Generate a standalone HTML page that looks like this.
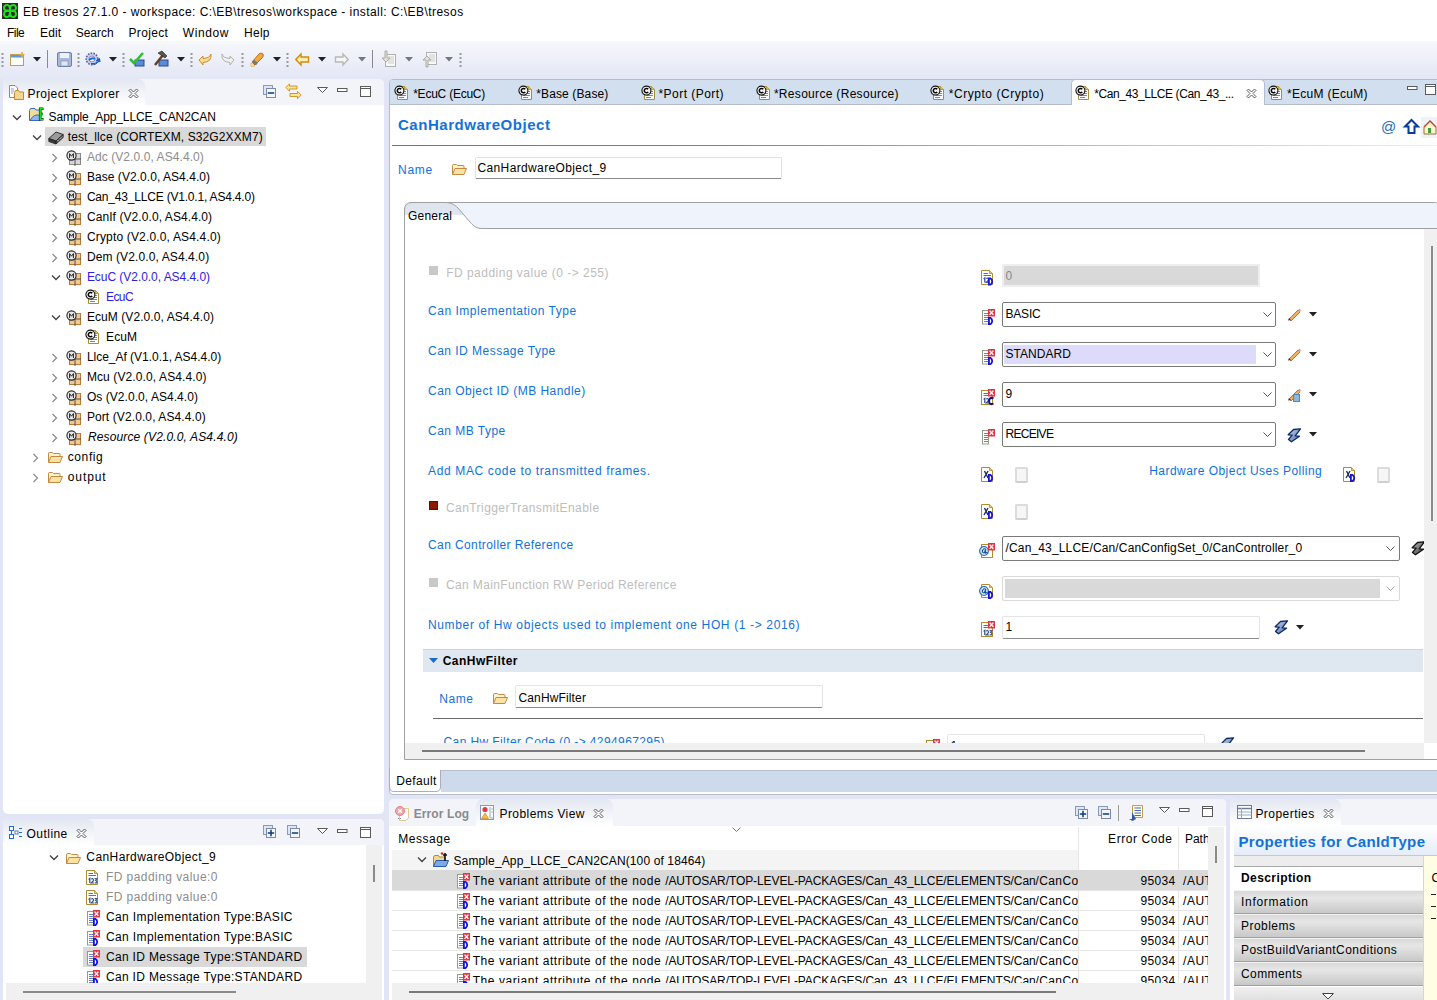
<!DOCTYPE html>
<html><head><meta charset="utf-8"><style>
html,body{margin:0;padding:0}
body{width:1437px;height:1000px;overflow:hidden;position:relative;background:#e1e5f5;font-family:"Liberation Sans",sans-serif}
.t{position:absolute;white-space:nowrap;font-family:"Liberation Sans",sans-serif}
svg{overflow:visible}
</style></head><body>
<svg width="0" height="0" style="position:absolute"><defs><linearGradient id="wgb" x1="0" y1="0" x2="1" y2="1"><stop offset="0" stop-color="#c8d4ea"/><stop offset="1" stop-color="#4a68a8"/></linearGradient><linearGradient id="wgd" x1="0" y1="0" x2="1" y2="1"><stop offset="0" stop-color="#bbb"/><stop offset="1" stop-color="#333"/></linearGradient></defs></svg>
<div style="position:absolute;left:0px;top:0px;width:1437px;height:41px;background:#fff"></div>
<div style="position:absolute;left:0px;top:41px;width:1437px;height:38px;background:linear-gradient(#f7f8fc,#e3e7f5)"></div>
<svg style="position:absolute;left:2px;top:3px" width="16" height="16" viewBox="0 0 16 16"><rect x="0" y="0" width="16" height="16" fill="#2a2a2a"/><path d="M8 2 V14 M8 7.5 Q8 2 5 2 Q2 2 2 5 Q2 7.5 5 7.5 H8 M8 8 Q8 14 5 14 Q2 14 2 11 Q2 8 5 8 H8 M8 7.5 Q8 2 11 2 Q14 2 14 5 Q14 7.5 11 7.5 H8 M8 8 Q8 14 11 14 Q14 14 14 11 Q14 8 11 8 H8" fill="none" stroke="#20e020" stroke-width="1.9"/></svg>
<div class="t" style="left:22.9px;top:6px;font-size:12px;line-height:12px;color:#000;letter-spacing:0.446px">EB tresos 27.1.0 - workspace: C:\EB\tresos\workspace - install: C:\EB\tresos</div>
<div class="t" style="left:7.0px;top:27px;font-size:12px;line-height:12px;color:#000;letter-spacing:-0.515px">File</div>
<div class="t" style="left:40.0px;top:27px;font-size:12px;line-height:12px;color:#000;letter-spacing:0.176px">Edit</div>
<div class="t" style="left:75.7px;top:27px;font-size:12px;line-height:12px;color:#000">Search</div>
<div class="t" style="left:128.5px;top:27px;font-size:12px;line-height:12px;color:#000;letter-spacing:0.326px">Project</div>
<div class="t" style="left:182.8px;top:27px;font-size:12px;line-height:12px;color:#000;letter-spacing:0.602px">Window</div>
<div class="t" style="left:244.1px;top:27px;font-size:12px;line-height:12px;color:#000;letter-spacing:0.238px">Help</div>
<div style="position:absolute;left:3px;top:79px;width:381px;height:735px;background:#fff;border-radius:5px"></div>
<div style="position:absolute;left:3px;top:79px;width:381px;height:26px;background:#f3f4fa;border-radius:5px 5px 0 0"></div>
<div style="position:absolute;left:3px;top:79px;width:142px;height:26px;background:linear-gradient(#e3e7f1,#ffffff);border-radius:5px 7px 0 0"></div>
<svg style="position:absolute;left:1px;top:52px" width="3" height="16" viewBox="0 0 3 16"><rect x="0.5" y="1" width="2" height="2" fill="#9a9a9a"/><rect x="0.5" y="5" width="2" height="2" fill="#9a9a9a"/><rect x="0.5" y="9" width="2" height="2" fill="#9a9a9a"/><rect x="0.5" y="13" width="2" height="2" fill="#9a9a9a"/></svg>
<svg style="position:absolute;left:77px;top:52px" width="3" height="16" viewBox="0 0 3 16"><rect x="0.5" y="1" width="2" height="2" fill="#9a9a9a"/><rect x="0.5" y="5" width="2" height="2" fill="#9a9a9a"/><rect x="0.5" y="9" width="2" height="2" fill="#9a9a9a"/><rect x="0.5" y="13" width="2" height="2" fill="#9a9a9a"/></svg>
<svg style="position:absolute;left:122px;top:52px" width="3" height="16" viewBox="0 0 3 16"><rect x="0.5" y="1" width="2" height="2" fill="#9a9a9a"/><rect x="0.5" y="5" width="2" height="2" fill="#9a9a9a"/><rect x="0.5" y="9" width="2" height="2" fill="#9a9a9a"/><rect x="0.5" y="13" width="2" height="2" fill="#9a9a9a"/></svg>
<svg style="position:absolute;left:190px;top:52px" width="3" height="16" viewBox="0 0 3 16"><rect x="0.5" y="1" width="2" height="2" fill="#9a9a9a"/><rect x="0.5" y="5" width="2" height="2" fill="#9a9a9a"/><rect x="0.5" y="9" width="2" height="2" fill="#9a9a9a"/><rect x="0.5" y="13" width="2" height="2" fill="#9a9a9a"/></svg>
<svg style="position:absolute;left:241px;top:52px" width="3" height="16" viewBox="0 0 3 16"><rect x="0.5" y="1" width="2" height="2" fill="#9a9a9a"/><rect x="0.5" y="5" width="2" height="2" fill="#9a9a9a"/><rect x="0.5" y="9" width="2" height="2" fill="#9a9a9a"/><rect x="0.5" y="13" width="2" height="2" fill="#9a9a9a"/></svg>
<svg style="position:absolute;left:286px;top:52px" width="3" height="16" viewBox="0 0 3 16"><rect x="0.5" y="1" width="2" height="2" fill="#9a9a9a"/><rect x="0.5" y="5" width="2" height="2" fill="#9a9a9a"/><rect x="0.5" y="9" width="2" height="2" fill="#9a9a9a"/><rect x="0.5" y="13" width="2" height="2" fill="#9a9a9a"/></svg>
<svg style="position:absolute;left:459px;top:52px" width="3" height="16" viewBox="0 0 3 16"><rect x="0.5" y="1" width="2" height="2" fill="#9a9a9a"/><rect x="0.5" y="5" width="2" height="2" fill="#9a9a9a"/><rect x="0.5" y="9" width="2" height="2" fill="#9a9a9a"/><rect x="0.5" y="13" width="2" height="2" fill="#9a9a9a"/></svg>
<div style="position:absolute;left:47px;top:50px;width:1px;height:18px;background:#8a8a8a"></div>
<div style="position:absolute;left:372px;top:50px;width:1px;height:18px;background:#8a8a8a"></div>
<svg style="position:absolute;left:10px;top:52px" width="16" height="15" viewBox="0 0 16 15"><rect x="0.5" y="2.5" width="13" height="11" fill="#fffef8" stroke="#c0a050"/><rect x="1" y="3" width="12" height="2.5" fill="#5a9ae0"/><path d="M12 0 V5 M9.5 2.5 H14.5" stroke="#e0b040" stroke-width="1.6"/></svg>
<svg style="position:absolute;left:33px;top:57px" width="8" height="5" viewBox="0 0 8 5"><path d="M0 0 H8 L4 4.5 Z" fill="#222"/></svg>
<svg style="position:absolute;left:57px;top:52px" width="16" height="15" viewBox="0 0 16 15"><rect x="0.5" y="0.5" width="14" height="14" rx="1.5" fill="#a8b8d8" stroke="#6a80b0"/><rect x="3" y="1" width="9" height="5" fill="#eef2f8"/><rect x="4" y="9" width="7" height="5" fill="#dfe6f2" stroke="#7a8ab0" stroke-width="0.6"/></svg>
<svg style="position:absolute;left:85px;top:51px" width="15" height="16" viewBox="0 0 15 16"><circle cx="7" cy="8" r="5.8" fill="#c8cce8" stroke="#5a60a0" stroke-width="1.6" stroke-dasharray="1.6 1.2"/><circle cx="7" cy="8" r="3" fill="#eef0fa" stroke="#7a80b8" stroke-width="0.8"/><path d="M6 12.5 Q11 14.5 13.5 10 L11.5 9.5 L14.5 7.5 L15 11" fill="#1a70e0" stroke="#0a50c0" stroke-width="1"/><path d="M4 9 Q7 6 10 8" fill="none" stroke="#1a70e0" stroke-width="1.8"/></svg>
<svg style="position:absolute;left:109px;top:57px" width="8" height="5" viewBox="0 0 8 5"><path d="M0 0 H8 L4 4.5 Z" fill="#222"/></svg>
<svg style="position:absolute;left:129px;top:51px" width="16" height="16" viewBox="0 0 16 16"><rect x="6" y="9" width="9" height="6" fill="#5a8ad8" stroke="#2a4a90"/><path d="M1 8 L5 12 L14 2" fill="none" stroke="#30c030" stroke-width="2.6"/></svg>
<svg style="position:absolute;left:153px;top:51px" width="16" height="16" viewBox="0 0 16 16"><rect x="6" y="9" width="9" height="6" fill="#5a8ad8" stroke="#2a4a90"/><path d="M2 14 L10 4" stroke="#6a4018" stroke-width="2.5"/><path d="M5 2 L9 0 L14 5 L12 7 Z" fill="#555" stroke="#222" stroke-width="0.6"/></svg>
<svg style="position:absolute;left:177px;top:57px" width="8" height="5" viewBox="0 0 8 5"><path d="M0 0 H8 L4 4.5 Z" fill="#222"/></svg>
<svg style="position:absolute;left:198px;top:52px" width="15" height="15" viewBox="0 0 15 15"><path d="M1 8 L5 4 L5 6.5 Q12 6 13 2 Q14 10 5 10.5 L5 13 Z" fill="#f8d890" stroke="#c89030"/></svg>
<svg style="position:absolute;left:220px;top:52px" width="15" height="15" viewBox="0 0 15 15"><path d="M14 8 L10 4 L10 6.5 Q3 6 2 2 Q1 10 10 10.5 L10 13 Z" fill="#f0f0f0" stroke="#b0b0b0"/></svg>
<svg style="position:absolute;left:249px;top:52px" width="16" height="15" viewBox="0 0 16 15"><path d="M3 10 L10 2 Q12 0 14 2 Q15 4 13 6 L6 13 Z" fill="#f0a840" stroke="#c07018"/><path d="M2 11 L6 14 L2 14.5 Z" fill="#fff8c0" stroke="#c0a040" stroke-width="0.6"/><path d="M4 9 L8 12" stroke="#777" stroke-width="3"/></svg>
<svg style="position:absolute;left:273px;top:57px" width="8" height="5" viewBox="0 0 8 5"><path d="M0 0 H8 L4 4.5 Z" fill="#222"/></svg>
<svg style="position:absolute;left:295px;top:53px" width="15" height="13" viewBox="0 0 15 13"><path d="M0.8 6.5 L6 1 V4 H13.5 V9 H6 V12 Z" fill="#fff0b0" stroke="#d08a10" stroke-width="1.4"/></svg>
<svg style="position:absolute;left:318px;top:57px" width="8" height="5" viewBox="0 0 8 5"><path d="M0 0 H8 L4 4.5 Z" fill="#222"/></svg>
<svg style="position:absolute;left:334px;top:53px" width="15" height="13" viewBox="0 0 15 13"><path d="M14.2 6.5 L9 1 V4 H1.5 V9 H9 V12 Z" fill="#f5f5f5" stroke="#b8b8b8" stroke-width="1.4"/></svg>
<svg style="position:absolute;left:358px;top:57px" width="8" height="5" viewBox="0 0 8 5"><path d="M0 0 H8 L4 4.5 Z" fill="#777"/></svg>
<svg style="position:absolute;left:381px;top:51px" width="15" height="16" viewBox="0 0 15 16"><rect x="4.5" y="3.5" width="10" height="12" fill="#f8f8f8" stroke="#b0b0b0"/><path d="M7 6 H13 M7 8 H13 M7 10 H13 M7 12 H13" stroke="#ccc"/><path d="M4 0 V7 L1 7 L5 11 L9 7 L6 7 V0 Z" fill="#e8e4d0" stroke="#aaa"/></svg>
<svg style="position:absolute;left:405px;top:57px" width="8" height="5" viewBox="0 0 8 5"><path d="M0 0 H8 L4 4.5 Z" fill="#777"/></svg>
<svg style="position:absolute;left:422px;top:51px" width="15" height="16" viewBox="0 0 15 16"><rect x="4.5" y="1.5" width="10" height="12" fill="#f8f8f8" stroke="#b0b0b0"/><path d="M7 4 H13 M7 6 H13 M7 8 H13 M7 10 H13" stroke="#ccc"/><path d="M4 16 V9 L1 9 L5 5 L9 9 L6 9 V16 Z" fill="#e8e4d0" stroke="#aaa"/></svg>
<svg style="position:absolute;left:445px;top:57px" width="8" height="5" viewBox="0 0 8 5"><path d="M0 0 H8 L4 4.5 Z" fill="#777"/></svg>
<svg style="position:absolute;left:9px;top:85px" width="16" height="16" viewBox="0 0 16 16"><path d="M0.5 0.5 H6 L8.5 3 V12.5 H0.5 Z" fill="#fff" stroke="#a08a60"/><path d="M2 4 H5 M2 6 H5 M2 8 H4" stroke="#8aa0c8"/><path d="M5.5 7.5 L6.5 5.5 H9.5 L10.5 7 H14.5 V14.5 H5.5 Z" fill="#f6d690" stroke="#c08a30"/></svg>
<div class="t" style="left:27.5px;top:88px;font-size:12px;line-height:12px;color:#000;letter-spacing:0.429px">Project Explorer</div>
<svg style="position:absolute;left:128px;top:88px" width="11" height="11" viewBox="0 0 11 11"><path d="M1 2.5 L2.5 1 L5.5 4 L8.5 1 L10 2.5 L7 5.5 L10 8.5 L8.5 10 L5.5 7 L2.5 10 L1 8.5 L4 5.5 Z" fill="#fff" stroke="#5a5a5a" stroke-width="1"/></svg>
<svg style="position:absolute;left:263px;top:85px" width="14" height="14" viewBox="0 0 14 14"><rect x="0.5" y="0.5" width="9" height="9" fill="#dde6f2" stroke="#8a9ab8"/><rect x="3.5" y="3.5" width="9" height="9" fill="#f2f6fb" stroke="#7a8aa8"/><path d="M4.8 8 H11.2" stroke="#0a3a80" stroke-width="1.5"/></svg>
<svg style="position:absolute;left:285px;top:83px" width="17" height="17" viewBox="0 0 17 17"><path d="M0.8 4.5 L4.5 0.8 V3 H12 V6 H4.5 V8.2 Z" fill="#fbe39a" stroke="#c89020" stroke-width="0.9"/><path d="M16.2 12 L12.5 8.3 V10.5 H5 V13.5 H12.5 V15.7 Z" fill="#fbe39a" stroke="#c89020" stroke-width="0.9"/></svg>
<svg style="position:absolute;left:317px;top:87px" width="11" height="7" viewBox="0 0 11 7"><path d="M0.5 0.5 H10.5 L5.5 5.5 Z" fill="#fff" stroke="#5a5a5a"/></svg>
<svg style="position:absolute;left:337px;top:88px" width="11" height="6" viewBox="0 0 11 6"><rect x="0.5" y="0.5" width="9.5" height="3" fill="#fff" stroke="#5a5a5a"/></svg>
<svg style="position:absolute;left:359.5px;top:86px" width="11" height="11" viewBox="0 0 11 11"><rect x="0.5" y="0.5" width="10" height="10" fill="#fff" stroke="#5a5a5a"/><path d="M0.5 2.5 H10.5" stroke="#5a5a5a" stroke-width="1"/></svg>
<div style="position:absolute;left:45px;top:127px;width:221px;height:19px;background:#d9d9d9"></div>
<svg style="position:absolute;left:12px;top:113.5px" width="10" height="7" viewBox="0 0 10 7"><path d="M1 1.5 L5 5.5 L9 1.5" fill="none" stroke="#404040" stroke-width="1.3"/></svg>
<svg style="position:absolute;left:29px;top:108px" width="17" height="14" viewBox="0 0 17 14"><path d="M0.5 2.5 L1.5 0.5 H6 L7 2 H11 V12.5 H0.5 Z" fill="#f3dc9a" stroke="#3a6ac8"/><path d="M1 12.5 Q5 5 11 7.5 V12.5 Z" fill="#8cb8f0" stroke="#3a6ac8"/><path d="M14.5 0.8 H11.2 V11.2 H14.5 M11.2 6 H14" fill="none" stroke="#111" stroke-width="2.6"/><path d="M14.5 0.8 H11.2 V11.2 H14.5 M11.2 6 H14" fill="none" stroke="#22dd22" stroke-width="1.5"/></svg>
<div class="t" style="left:48.5px;top:111px;font-size:12px;line-height:12px;color:#000;letter-spacing:-0.092px">Sample_App_LLCE_CAN2CAN</div>
<svg style="position:absolute;left:31.5px;top:133.5px" width="10" height="7" viewBox="0 0 10 7"><path d="M1 1.5 L5 5.5 L9 1.5" fill="none" stroke="#404040" stroke-width="1.3"/></svg>
<svg style="position:absolute;left:48.2px;top:131px" width="16" height="14" viewBox="0 0 16 14"><path d="M0.8 7.5 L8 1 L15.2 3.5 L8 10 Z" fill="#9a9a9a" stroke="#222" stroke-width="0.9"/><path d="M0.8 7.5 L8 10 V13 L0.8 10.5 Z" fill="#3a3a3a" stroke="#222" stroke-width="0.8"/><path d="M8 10 L15.2 3.5 V6.5 L8 13 Z" fill="#555" stroke="#222" stroke-width="0.8"/><path d="M9.5 10 L10.5 9 M11.5 8.2 L12.5 7.2 M13.3 6.5 L14.2 5.6" stroke="#eee" stroke-width="1"/></svg>
<div class="t" style="left:67.7px;top:131px;font-size:12px;line-height:12px;color:#000;letter-spacing:0.110px">test_llce (CORTEXM, S32G2XXM7)</div>
<svg style="position:absolute;left:51px;top:153px" width="7" height="10" viewBox="0 0 7 10"><path d="M1.5 1 L5.5 5 L1.5 9" fill="none" stroke="#8a8a8a" stroke-width="1.2"/></svg>
<svg style="position:absolute;left:66.4px;top:149.5px" width="16" height="16" viewBox="0 0 16 16"><rect x="3.5" y="3.5" width="11" height="11" fill="#d8d8d8" stroke="#8a8a8a"/><path d="M9 3 V16 M3 9 H15" stroke="#444" stroke-width="0.9"/><circle cx="5.5" cy="5.5" r="4.6" fill="#e8e8e8" stroke="#222" stroke-width="1.1"/><path d="M3.6 8 V3.6 L5.5 6.2 L7.4 3.6 V8" fill="none" stroke="#222" stroke-width="1"/></svg>
<div class="t" style="left:86.9px;top:151px;font-size:12px;line-height:12px;color:#8c8c8c;letter-spacing:0.078px">Adc (V2.0.0, AS4.4.0)</div>
<svg style="position:absolute;left:51px;top:173px" width="7" height="10" viewBox="0 0 7 10"><path d="M1.5 1 L5.5 5 L1.5 9" fill="none" stroke="#8a8a8a" stroke-width="1.2"/></svg>
<svg style="position:absolute;left:66.4px;top:169.5px" width="16" height="16" viewBox="0 0 16 16"><rect x="3.5" y="3.5" width="11" height="11" fill="#f0c890" stroke="#b87a3a"/><path d="M9 3 V16 M3 9 H15" stroke="#444" stroke-width="0.9"/><circle cx="5.5" cy="5.5" r="4.6" fill="#e8e8e8" stroke="#222" stroke-width="1.1"/><path d="M3.6 8 V3.6 L5.5 6.2 L7.4 3.6 V8" fill="none" stroke="#222" stroke-width="1"/></svg>
<div class="t" style="left:86.9px;top:171px;font-size:12px;line-height:12px;color:#000;letter-spacing:0.052px">Base (V2.0.0, AS4.4.0)</div>
<svg style="position:absolute;left:51px;top:193px" width="7" height="10" viewBox="0 0 7 10"><path d="M1.5 1 L5.5 5 L1.5 9" fill="none" stroke="#8a8a8a" stroke-width="1.2"/></svg>
<svg style="position:absolute;left:66.4px;top:189.5px" width="16" height="16" viewBox="0 0 16 16"><rect x="3.5" y="3.5" width="11" height="11" fill="#f0c890" stroke="#b87a3a"/><path d="M9 3 V16 M3 9 H15" stroke="#444" stroke-width="0.9"/><circle cx="5.5" cy="5.5" r="4.6" fill="#e8e8e8" stroke="#222" stroke-width="1.1"/><path d="M3.6 8 V3.6 L5.5 6.2 L7.4 3.6 V8" fill="none" stroke="#222" stroke-width="1"/></svg>
<div class="t" style="left:86.9px;top:191px;font-size:12px;line-height:12px;color:#000;letter-spacing:-0.193px">Can_43_LLCE (V1.0.1, AS4.4.0)</div>
<svg style="position:absolute;left:51px;top:213px" width="7" height="10" viewBox="0 0 7 10"><path d="M1.5 1 L5.5 5 L1.5 9" fill="none" stroke="#8a8a8a" stroke-width="1.2"/></svg>
<svg style="position:absolute;left:66.4px;top:209.5px" width="16" height="16" viewBox="0 0 16 16"><rect x="3.5" y="3.5" width="11" height="11" fill="#f0c890" stroke="#b87a3a"/><path d="M9 3 V16 M3 9 H15" stroke="#444" stroke-width="0.9"/><circle cx="5.5" cy="5.5" r="4.6" fill="#e8e8e8" stroke="#222" stroke-width="1.1"/><path d="M3.6 8 V3.6 L5.5 6.2 L7.4 3.6 V8" fill="none" stroke="#222" stroke-width="1"/></svg>
<div class="t" style="left:86.9px;top:211px;font-size:12px;line-height:12px;color:#000;letter-spacing:0.080px">CanIf (V2.0.0, AS4.4.0)</div>
<svg style="position:absolute;left:51px;top:233px" width="7" height="10" viewBox="0 0 7 10"><path d="M1.5 1 L5.5 5 L1.5 9" fill="none" stroke="#8a8a8a" stroke-width="1.2"/></svg>
<svg style="position:absolute;left:66.4px;top:229.5px" width="16" height="16" viewBox="0 0 16 16"><rect x="3.5" y="3.5" width="11" height="11" fill="#f0c890" stroke="#b87a3a"/><path d="M9 3 V16 M3 9 H15" stroke="#444" stroke-width="0.9"/><circle cx="5.5" cy="5.5" r="4.6" fill="#e8e8e8" stroke="#222" stroke-width="1.1"/><path d="M3.6 8 V3.6 L5.5 6.2 L7.4 3.6 V8" fill="none" stroke="#222" stroke-width="1"/></svg>
<div class="t" style="left:86.9px;top:231px;font-size:12px;line-height:12px;color:#000;letter-spacing:0.165px">Crypto (V2.0.0, AS4.4.0)</div>
<svg style="position:absolute;left:51px;top:253px" width="7" height="10" viewBox="0 0 7 10"><path d="M1.5 1 L5.5 5 L1.5 9" fill="none" stroke="#8a8a8a" stroke-width="1.2"/></svg>
<svg style="position:absolute;left:66.4px;top:249.5px" width="16" height="16" viewBox="0 0 16 16"><rect x="3.5" y="3.5" width="11" height="11" fill="#f0c890" stroke="#b87a3a"/><path d="M9 3 V16 M3 9 H15" stroke="#444" stroke-width="0.9"/><circle cx="5.5" cy="5.5" r="4.6" fill="#e8e8e8" stroke="#222" stroke-width="1.1"/><path d="M3.6 8 V3.6 L5.5 6.2 L7.4 3.6 V8" fill="none" stroke="#222" stroke-width="1"/></svg>
<div class="t" style="left:86.9px;top:251px;font-size:12px;line-height:12px;color:#000;letter-spacing:0.109px">Dem (V2.0.0, AS4.4.0)</div>
<svg style="position:absolute;left:51px;top:273.5px" width="10" height="7" viewBox="0 0 10 7"><path d="M1 1.5 L5 5.5 L9 1.5" fill="none" stroke="#404040" stroke-width="1.3"/></svg>
<svg style="position:absolute;left:66.4px;top:269.5px" width="16" height="16" viewBox="0 0 16 16"><rect x="3.5" y="3.5" width="11" height="11" fill="#f0c890" stroke="#b87a3a"/><path d="M9 3 V16 M3 9 H15" stroke="#444" stroke-width="0.9"/><circle cx="5.5" cy="5.5" r="4.6" fill="#e8e8e8" stroke="#222" stroke-width="1.1"/><path d="M3.6 8 V3.6 L5.5 6.2 L7.4 3.6 V8" fill="none" stroke="#222" stroke-width="1"/></svg>
<div class="t" style="left:86.9px;top:271px;font-size:12px;line-height:12px;color:#2c1ce4;letter-spacing:-0.044px">EcuC (V2.0.0, AS4.4.0)</div>
<svg style="position:absolute;left:85.1px;top:289px" width="16" height="16" viewBox="0 0 16 16"><path d="M3.5 1.5 H10.5 L13.5 4.5 V14.5 H3.5 Z" fill="#fbfcff" stroke="#a89030"/><path d="M10.5 1.5 V4.5 H13.5" fill="#e0c060" stroke="#a89030" stroke-width="0.8"/><path d="M8 6.5 H12 M8 8.5 H12 M6 10.5 H12 M5 12.5 H10" stroke="#5a78c0" stroke-width="0.9"/><circle cx="5.4" cy="5.6" r="4.5" fill="#f4f4f4" stroke="#111" stroke-width="1.1"/><path d="M7.2 4.2 A2.2 2.2 0 1 0 7.2 7" fill="none" stroke="#000" stroke-width="1.5"/></svg>
<div class="t" style="left:106.1px;top:291px;font-size:12px;line-height:12px;color:#2c1ce4;letter-spacing:-0.615px">EcuC</div>
<svg style="position:absolute;left:51px;top:313.5px" width="10" height="7" viewBox="0 0 10 7"><path d="M1 1.5 L5 5.5 L9 1.5" fill="none" stroke="#404040" stroke-width="1.3"/></svg>
<svg style="position:absolute;left:66.4px;top:309.5px" width="16" height="16" viewBox="0 0 16 16"><rect x="3.5" y="3.5" width="11" height="11" fill="#f0c890" stroke="#b87a3a"/><path d="M9 3 V16 M3 9 H15" stroke="#444" stroke-width="0.9"/><circle cx="5.5" cy="5.5" r="4.6" fill="#e8e8e8" stroke="#222" stroke-width="1.1"/><path d="M3.6 8 V3.6 L5.5 6.2 L7.4 3.6 V8" fill="none" stroke="#222" stroke-width="1"/></svg>
<div class="t" style="left:86.9px;top:311px;font-size:12px;line-height:12px;color:#000;letter-spacing:0.079px">EcuM (V2.0.0, AS4.4.0)</div>
<svg style="position:absolute;left:85.1px;top:329px" width="16" height="16" viewBox="0 0 16 16"><path d="M3.5 1.5 H10.5 L13.5 4.5 V14.5 H3.5 Z" fill="#fbfcff" stroke="#a89030"/><path d="M10.5 1.5 V4.5 H13.5" fill="#e0c060" stroke="#a89030" stroke-width="0.8"/><path d="M8 6.5 H12 M8 8.5 H12 M6 10.5 H12 M5 12.5 H10" stroke="#5a78c0" stroke-width="0.9"/><circle cx="5.4" cy="5.6" r="4.5" fill="#f4f4f4" stroke="#111" stroke-width="1.1"/><path d="M7.2 4.2 A2.2 2.2 0 1 0 7.2 7" fill="none" stroke="#000" stroke-width="1.5"/></svg>
<div class="t" style="left:106.1px;top:331px;font-size:12px;line-height:12px;color:#000;letter-spacing:0.043px">EcuM</div>
<svg style="position:absolute;left:51px;top:353px" width="7" height="10" viewBox="0 0 7 10"><path d="M1.5 1 L5.5 5 L1.5 9" fill="none" stroke="#8a8a8a" stroke-width="1.2"/></svg>
<svg style="position:absolute;left:66.4px;top:349.5px" width="16" height="16" viewBox="0 0 16 16"><rect x="3.5" y="3.5" width="11" height="11" fill="#f0c890" stroke="#b87a3a"/><path d="M9 3 V16 M3 9 H15" stroke="#444" stroke-width="0.9"/><circle cx="5.5" cy="5.5" r="4.6" fill="#e8e8e8" stroke="#222" stroke-width="1.1"/><path d="M3.6 8 V3.6 L5.5 6.2 L7.4 3.6 V8" fill="none" stroke="#222" stroke-width="1"/></svg>
<div class="t" style="left:86.9px;top:351px;font-size:12px;line-height:12px;color:#000;letter-spacing:-0.020px">Llce_Af (V1.0.1, AS4.4.0)</div>
<svg style="position:absolute;left:51px;top:373px" width="7" height="10" viewBox="0 0 7 10"><path d="M1.5 1 L5.5 5 L1.5 9" fill="none" stroke="#8a8a8a" stroke-width="1.2"/></svg>
<svg style="position:absolute;left:66.4px;top:369.5px" width="16" height="16" viewBox="0 0 16 16"><rect x="3.5" y="3.5" width="11" height="11" fill="#f0c890" stroke="#b87a3a"/><path d="M9 3 V16 M3 9 H15" stroke="#444" stroke-width="0.9"/><circle cx="5.5" cy="5.5" r="4.6" fill="#e8e8e8" stroke="#222" stroke-width="1.1"/><path d="M3.6 8 V3.6 L5.5 6.2 L7.4 3.6 V8" fill="none" stroke="#222" stroke-width="1"/></svg>
<div class="t" style="left:86.9px;top:371px;font-size:12px;line-height:12px;color:#000;letter-spacing:0.113px">Mcu (V2.0.0, AS4.4.0)</div>
<svg style="position:absolute;left:51px;top:393px" width="7" height="10" viewBox="0 0 7 10"><path d="M1.5 1 L5.5 5 L1.5 9" fill="none" stroke="#8a8a8a" stroke-width="1.2"/></svg>
<svg style="position:absolute;left:66.4px;top:389.5px" width="16" height="16" viewBox="0 0 16 16"><rect x="3.5" y="3.5" width="11" height="11" fill="#f0c890" stroke="#b87a3a"/><path d="M9 3 V16 M3 9 H15" stroke="#444" stroke-width="0.9"/><circle cx="5.5" cy="5.5" r="4.6" fill="#e8e8e8" stroke="#222" stroke-width="1.1"/><path d="M3.6 8 V3.6 L5.5 6.2 L7.4 3.6 V8" fill="none" stroke="#222" stroke-width="1"/></svg>
<div class="t" style="left:86.9px;top:391px;font-size:12px;line-height:12px;color:#000;letter-spacing:0.053px">Os (V2.0.0, AS4.4.0)</div>
<svg style="position:absolute;left:51px;top:413px" width="7" height="10" viewBox="0 0 7 10"><path d="M1.5 1 L5.5 5 L1.5 9" fill="none" stroke="#8a8a8a" stroke-width="1.2"/></svg>
<svg style="position:absolute;left:66.4px;top:409.5px" width="16" height="16" viewBox="0 0 16 16"><rect x="3.5" y="3.5" width="11" height="11" fill="#f0c890" stroke="#b87a3a"/><path d="M9 3 V16 M3 9 H15" stroke="#444" stroke-width="0.9"/><circle cx="5.5" cy="5.5" r="4.6" fill="#e8e8e8" stroke="#222" stroke-width="1.1"/><path d="M3.6 8 V3.6 L5.5 6.2 L7.4 3.6 V8" fill="none" stroke="#222" stroke-width="1"/></svg>
<div class="t" style="left:86.9px;top:411px;font-size:12px;line-height:12px;color:#000;letter-spacing:0.101px">Port (V2.0.0, AS4.4.0)</div>
<svg style="position:absolute;left:51px;top:433px" width="7" height="10" viewBox="0 0 7 10"><path d="M1.5 1 L5.5 5 L1.5 9" fill="none" stroke="#8a8a8a" stroke-width="1.2"/></svg>
<svg style="position:absolute;left:66.4px;top:429.5px" width="16" height="16" viewBox="0 0 16 16"><rect x="3.5" y="3.5" width="11" height="11" fill="#f0c890" stroke="#b87a3a"/><path d="M9 3 V16 M3 9 H15" stroke="#444" stroke-width="0.9"/><circle cx="5.5" cy="5.5" r="4.6" fill="#e8e8e8" stroke="#222" stroke-width="1.1"/><path d="M3.6 8 V3.6 L5.5 6.2 L7.4 3.6 V8" fill="none" stroke="#222" stroke-width="1"/></svg>
<div class="t" style="left:87.9px;top:431px;font-size:12px;line-height:12px;color:#000;letter-spacing:0.142px;font-style:italic">Resource (V2.0.0, AS4.4.0)</div>
<svg style="position:absolute;left:31.5px;top:453px" width="7" height="10" viewBox="0 0 7 10"><path d="M1.5 1 L5.5 5 L1.5 9" fill="none" stroke="#8a8a8a" stroke-width="1.2"/></svg>
<svg style="position:absolute;left:48.2px;top:452px" width="16" height="12" viewBox="0 0 16 12"><path d="M0.5 10.5 V1.5 Q0.5 0.5 1.5 0.5 H4.5 L5.5 1.5 H11 Q12 1.5 12 2.5 V4.5" fill="#fdf2d0" stroke="#c08a40"/><path d="M0.5 10.5 L3 4.5 H14.5 L12 10.5 Z" fill="#fbe2a4" stroke="#c08a40"/></svg>
<div class="t" style="left:67.7px;top:451px;font-size:12px;line-height:12px;color:#000;letter-spacing:0.617px">config</div>
<svg style="position:absolute;left:31.5px;top:473px" width="7" height="10" viewBox="0 0 7 10"><path d="M1.5 1 L5.5 5 L1.5 9" fill="none" stroke="#8a8a8a" stroke-width="1.2"/></svg>
<svg style="position:absolute;left:48.2px;top:472px" width="16" height="12" viewBox="0 0 16 12"><path d="M0.5 10.5 V1.5 Q0.5 0.5 1.5 0.5 H4.5 L5.5 1.5 H11 Q12 1.5 12 2.5 V4.5" fill="#fdf2d0" stroke="#c08a40"/><path d="M0.5 10.5 L3 4.5 H14.5 L12 10.5 Z" fill="#fbe2a4" stroke="#c08a40"/></svg>
<div class="t" style="left:67.7px;top:471px;font-size:12px;line-height:12px;color:#000;letter-spacing:0.931px">output</div>
<div style="position:absolute;left:3px;top:819px;width:381px;height:190px;background:#fff;border-radius:5px"></div>
<div style="position:absolute;left:3px;top:819px;width:381px;height:26px;background:#f3f4fa;border-radius:5px 5px 0 0"></div>
<div style="position:absolute;left:3px;top:819px;width:91px;height:26px;background:linear-gradient(#e3e7f1,#ffffff);border-radius:5px 7px 0 0"></div>
<svg style="position:absolute;left:9px;top:826px" width="14" height="14" viewBox="0 0 14 14"><rect x="0.5" y="0.5" width="4" height="4" fill="#fff" stroke="#2a6ac0"/><rect x="0.5" y="8.5" width="4" height="4" fill="#fff" stroke="#2a6ac0"/><rect x="6" y="5" width="3" height="3" fill="#fff" stroke="#2a6ac0" stroke-width="0.8"/><path d="M2.5 4.5 V8.5 M10 2.5 H13 M10 6.5 H13 M10 10.5 H13" stroke="#2a6ac0"/></svg>
<div class="t" style="left:26.6px;top:828px;font-size:12px;line-height:12px;color:#000;letter-spacing:0.447px">Outline</div>
<svg style="position:absolute;left:76px;top:828px" width="11" height="11" viewBox="0 0 11 11"><path d="M1 2.5 L2.5 1 L5.5 4 L8.5 1 L10 2.5 L7 5.5 L10 8.5 L8.5 10 L5.5 7 L2.5 10 L1 8.5 L4 5.5 Z" fill="#fff" stroke="#5a5a5a" stroke-width="1"/></svg>
<svg style="position:absolute;left:263px;top:825px" width="14" height="14" viewBox="0 0 14 14"><rect x="0.5" y="0.5" width="9" height="9" fill="#dde6f2" stroke="#8a9ab8"/><rect x="3.5" y="3.5" width="9" height="9" fill="#f2f6fb" stroke="#7a8aa8"/><path d="M4.8 8 H11.2" stroke="#0a3a80" stroke-width="1.5"/><path d="M8 4.8 V11.2" stroke="#0a3a80" stroke-width="1.5"/></svg>
<svg style="position:absolute;left:287px;top:825px" width="14" height="14" viewBox="0 0 14 14"><rect x="0.5" y="0.5" width="9" height="9" fill="#dde6f2" stroke="#8a9ab8"/><rect x="3.5" y="3.5" width="9" height="9" fill="#f2f6fb" stroke="#7a8aa8"/><path d="M4.8 8 H11.2" stroke="#0a3a80" stroke-width="1.5"/></svg>
<svg style="position:absolute;left:317px;top:828px" width="11" height="7" viewBox="0 0 11 7"><path d="M0.5 0.5 H10.5 L5.5 5.5 Z" fill="#fff" stroke="#5a5a5a"/></svg>
<svg style="position:absolute;left:337px;top:829px" width="11" height="6" viewBox="0 0 11 6"><rect x="0.5" y="0.5" width="9.5" height="3" fill="#fff" stroke="#5a5a5a"/></svg>
<svg style="position:absolute;left:359.5px;top:827px" width="11" height="11" viewBox="0 0 11 11"><rect x="0.5" y="0.5" width="10" height="10" fill="#fff" stroke="#5a5a5a"/><path d="M0.5 2.5 H10.5" stroke="#5a5a5a" stroke-width="1"/></svg>
<div style="position:absolute;left:6px;top:845px;width:360px;height:138px;background:#fff"></div>
<div style="position:absolute;left:366px;top:845px;width:16px;height:138px;background:#f0f0f0"></div>
<div style="position:absolute;left:373px;top:865px;width:2px;height:17px;background:#8a8a8a"></div>
<div style="position:absolute;left:6px;top:983px;width:376px;height:17px;background:#f0f0f0"></div>
<div style="position:absolute;left:23px;top:991px;width:213px;height:2px;background:#8a8a8a"></div>
<div style="position:absolute;left:83px;top:947px;width:224px;height:20px;background:#d9d9d9"></div>
<div style="position:absolute;left:0;top:0;width:1437px;height:1000px;clip-path:inset(845px 1071px 17px 6px)">
<svg style="position:absolute;left:49px;top:854px" width="10" height="7" viewBox="0 0 10 7"><path d="M1 1.5 L5 5.5 L9 1.5" fill="none" stroke="#404040" stroke-width="1.3"/></svg>
<svg style="position:absolute;left:66px;top:853px" width="16" height="12" viewBox="0 0 16 12"><path d="M0.5 10.5 V1.5 Q0.5 0.5 1.5 0.5 H4.5 L5.5 1.5 H11 Q12 1.5 12 2.5 V4.5" fill="#fdf2d0" stroke="#c08a40"/><path d="M0.5 10.5 L3 4.5 H14.5 L12 10.5 Z" fill="#fbe2a4" stroke="#c08a40"/></svg>
<div class="t" style="left:86.3px;top:851px;font-size:12px;line-height:12px;color:#000;letter-spacing:0.413px">CanHardwareObject_9</div>
<svg style="position:absolute;left:81px;top:866px" width="24" height="24" viewBox="0 0 24 24"><path d="M5.5 4.5 H13.5 L16.5 7.5 V18.5 H5.5 Z" fill="#fff" stroke="#b08a30"/><path d="M13.5 4.5 V7.5 H16.5" fill="#e8c878" stroke="#b08a30" stroke-width="0.8"/><path d="M7.5 7.5 H12 M7.5 9.5 H15" stroke="#5a70b0"/><path d="M7.6 13.5 L8.8 12.5 V17" fill="none" stroke="#3a5590" stroke-width="1.3"/><path d="M10.2 13.3 Q10.6 12.5 11.6 12.5 Q13 13.1 12.4 14.7 L10.2 17 H13" fill="none" stroke="#3a5590" stroke-width="1.2"/><path d="M13.6 12.5 H15.8 L14.6 14.3 Q16.2 14.7 15.8 16.5 Q15 17.3 13.6 16.7" fill="none" stroke="#3a5590" stroke-width="1.2"/></svg>
<div class="t" style="left:105.9px;top:871px;font-size:12px;line-height:12px;color:#8c8c8c;letter-spacing:0.444px">FD padding value:0</div>
<svg style="position:absolute;left:81px;top:886px" width="24" height="24" viewBox="0 0 24 24"><path d="M5.5 4.5 H13.5 L16.5 7.5 V18.5 H5.5 Z" fill="#fff" stroke="#b08a30"/><path d="M13.5 4.5 V7.5 H16.5" fill="#e8c878" stroke="#b08a30" stroke-width="0.8"/><path d="M7.5 7.5 H12 M7.5 9.5 H15" stroke="#5a70b0"/><path d="M7.6 13.5 L8.8 12.5 V17" fill="none" stroke="#3a5590" stroke-width="1.3"/><path d="M10.2 13.3 Q10.6 12.5 11.6 12.5 Q13 13.1 12.4 14.7 L10.2 17 H13" fill="none" stroke="#3a5590" stroke-width="1.2"/><path d="M13.6 12.5 H15.8 L14.6 14.3 Q16.2 14.7 15.8 16.5 Q15 17.3 13.6 16.7" fill="none" stroke="#3a5590" stroke-width="1.2"/></svg>
<div class="t" style="left:105.9px;top:891px;font-size:12px;line-height:12px;color:#8c8c8c;letter-spacing:0.444px">FD padding value:0</div>
<svg style="position:absolute;left:81px;top:905px" width="24" height="24" viewBox="0 0 24 24"><rect x="6.5" y="6.5" width="6" height="13.5" fill="#fff" stroke="#9a9a88"/><path d="M8 9.5 H12 M8 11.5 H12 M8 13.5 H12 M8 15.5 H12 M8 17.5 H12" stroke="#6a80c0" stroke-width="1"/><rect x="12" y="5" width="7" height="7.5" fill="#e23444"/><path d="M13.6 6.6 L17.4 10.9 M17.4 6.6 L13.6 10.9" stroke="#fff" stroke-width="1.4"/><path d="M12.9 13.9 H14.6 A3.2 3.6 0 0 1 14.6 20.1 H12.9 Z" fill="#fff" stroke="#1414dc" stroke-width="1.8"/></svg>
<div class="t" style="left:105.9px;top:911px;font-size:12px;line-height:12px;color:#000;letter-spacing:0.385px">Can Implementation Type:BASIC</div>
<svg style="position:absolute;left:81px;top:925px" width="24" height="24" viewBox="0 0 24 24"><rect x="6.5" y="6.5" width="6" height="13.5" fill="#fff" stroke="#9a9a88"/><path d="M8 9.5 H12 M8 11.5 H12 M8 13.5 H12 M8 15.5 H12 M8 17.5 H12" stroke="#6a80c0" stroke-width="1"/><rect x="12" y="5" width="7" height="7.5" fill="#e23444"/><path d="M13.6 6.6 L17.4 10.9 M17.4 6.6 L13.6 10.9" stroke="#fff" stroke-width="1.4"/><path d="M12.9 13.9 H14.6 A3.2 3.6 0 0 1 14.6 20.1 H12.9 Z" fill="#fff" stroke="#1414dc" stroke-width="1.8"/></svg>
<div class="t" style="left:105.9px;top:931px;font-size:12px;line-height:12px;color:#000;letter-spacing:0.385px">Can Implementation Type:BASIC</div>
<svg style="position:absolute;left:81px;top:945px" width="24" height="24" viewBox="0 0 24 24"><rect x="6.5" y="6.5" width="6" height="13.5" fill="#fff" stroke="#9a9a88"/><path d="M8 9.5 H12 M8 11.5 H12 M8 13.5 H12 M8 15.5 H12 M8 17.5 H12" stroke="#6a80c0" stroke-width="1"/><rect x="12" y="5" width="7" height="7.5" fill="#e23444"/><path d="M13.6 6.6 L17.4 10.9 M17.4 6.6 L13.6 10.9" stroke="#fff" stroke-width="1.4"/><path d="M12.9 13.9 H14.6 A3.2 3.6 0 0 1 14.6 20.1 H12.9 Z" fill="#fff" stroke="#1414dc" stroke-width="1.8"/></svg>
<div class="t" style="left:105.9px;top:951px;font-size:12px;line-height:12px;color:#000;letter-spacing:0.343px">Can ID Message Type:STANDARD</div>
<svg style="position:absolute;left:81px;top:965px" width="24" height="24" viewBox="0 0 24 24"><rect x="6.5" y="6.5" width="6" height="13.5" fill="#fff" stroke="#9a9a88"/><path d="M8 9.5 H12 M8 11.5 H12 M8 13.5 H12 M8 15.5 H12 M8 17.5 H12" stroke="#6a80c0" stroke-width="1"/><rect x="12" y="5" width="7" height="7.5" fill="#e23444"/><path d="M13.6 6.6 L17.4 10.9 M17.4 6.6 L13.6 10.9" stroke="#fff" stroke-width="1.4"/><path d="M12.9 13.9 H14.6 A3.2 3.6 0 0 1 14.6 20.1 H12.9 Z" fill="#fff" stroke="#1414dc" stroke-width="1.8"/></svg>
<div class="t" style="left:105.9px;top:971px;font-size:12px;line-height:12px;color:#000;letter-spacing:0.343px">Can ID Message Type:STANDARD</div>
</div>
<div style="position:absolute;left:389px;top:79px;width:1060px;height:716px;background:#fff;border:1px solid #b6bccc;border-radius:4px;box-sizing:border-box"></div>
<div style="position:absolute;left:390px;top:80px;width:1050px;height:24px;background:#d1dfee;border-radius:3px 0 0 0"></div>
<div style="position:absolute;left:390px;top:104px;width:1050px;height:1px;background:#b6bccc"></div>
<div style="position:absolute;left:1071px;top:79px;width:194px;height:26px;background:#fff;border:1px solid #b6bccc;border-bottom:none;border-radius:5px 5px 0 0;box-sizing:border-box"></div>
<svg style="position:absolute;left:394.1px;top:85px" width="16" height="16" viewBox="0 0 16 16"><path d="M3.5 1.5 H10.5 L13.5 4.5 V14.5 H3.5 Z" fill="#fbfcff" stroke="#a89030"/><path d="M10.5 1.5 V4.5 H13.5" fill="#e0c060" stroke="#a89030" stroke-width="0.8"/><path d="M8 6.5 H12 M8 8.5 H12 M6 10.5 H12 M5 12.5 H10" stroke="#5a78c0" stroke-width="0.9"/><circle cx="5.4" cy="5.6" r="4.5" fill="#f4f4f4" stroke="#111" stroke-width="1.1"/><path d="M7.2 4.2 A2.2 2.2 0 1 0 7.2 7" fill="none" stroke="#000" stroke-width="1.5"/></svg>
<div class="t" style="left:413.2px;top:88px;font-size:12px;line-height:12px;color:#000;letter-spacing:-0.235px">*EcuC (EcuC)</div>
<svg style="position:absolute;left:517.5px;top:85px" width="16" height="16" viewBox="0 0 16 16"><path d="M3.5 1.5 H10.5 L13.5 4.5 V14.5 H3.5 Z" fill="#fbfcff" stroke="#a89030"/><path d="M10.5 1.5 V4.5 H13.5" fill="#e0c060" stroke="#a89030" stroke-width="0.8"/><path d="M8 6.5 H12 M8 8.5 H12 M6 10.5 H12 M5 12.5 H10" stroke="#5a78c0" stroke-width="0.9"/><circle cx="5.4" cy="5.6" r="4.5" fill="#f4f4f4" stroke="#111" stroke-width="1.1"/><path d="M7.2 4.2 A2.2 2.2 0 1 0 7.2 7" fill="none" stroke="#000" stroke-width="1.5"/></svg>
<div class="t" style="left:536.3px;top:88px;font-size:12px;line-height:12px;color:#000;letter-spacing:0.119px">*Base (Base)</div>
<svg style="position:absolute;left:640.5px;top:85px" width="16" height="16" viewBox="0 0 16 16"><path d="M3.5 1.5 H10.5 L13.5 4.5 V14.5 H3.5 Z" fill="#fbfcff" stroke="#a89030"/><path d="M10.5 1.5 V4.5 H13.5" fill="#e0c060" stroke="#a89030" stroke-width="0.8"/><path d="M8 6.5 H12 M8 8.5 H12 M6 10.5 H12 M5 12.5 H10" stroke="#5a78c0" stroke-width="0.9"/><circle cx="5.4" cy="5.6" r="4.5" fill="#f4f4f4" stroke="#111" stroke-width="1.1"/><path d="M7.2 4.2 A2.2 2.2 0 1 0 7.2 7" fill="none" stroke="#000" stroke-width="1.5"/></svg>
<div class="t" style="left:658.5px;top:88px;font-size:12px;line-height:12px;color:#000;letter-spacing:0.455px">*Port (Port)</div>
<svg style="position:absolute;left:755.5px;top:85px" width="16" height="16" viewBox="0 0 16 16"><path d="M3.5 1.5 H10.5 L13.5 4.5 V14.5 H3.5 Z" fill="#fbfcff" stroke="#a89030"/><path d="M10.5 1.5 V4.5 H13.5" fill="#e0c060" stroke="#a89030" stroke-width="0.8"/><path d="M8 6.5 H12 M8 8.5 H12 M6 10.5 H12 M5 12.5 H10" stroke="#5a78c0" stroke-width="0.9"/><circle cx="5.4" cy="5.6" r="4.5" fill="#f4f4f4" stroke="#111" stroke-width="1.1"/><path d="M7.2 4.2 A2.2 2.2 0 1 0 7.2 7" fill="none" stroke="#000" stroke-width="1.5"/></svg>
<div class="t" style="left:773.9px;top:88px;font-size:12px;line-height:12px;color:#000;letter-spacing:0.310px">*Resource (Resource)</div>
<svg style="position:absolute;left:930.2px;top:85px" width="16" height="16" viewBox="0 0 16 16"><path d="M3.5 1.5 H10.5 L13.5 4.5 V14.5 H3.5 Z" fill="#fbfcff" stroke="#a89030"/><path d="M10.5 1.5 V4.5 H13.5" fill="#e0c060" stroke="#a89030" stroke-width="0.8"/><path d="M8 6.5 H12 M8 8.5 H12 M6 10.5 H12 M5 12.5 H10" stroke="#5a78c0" stroke-width="0.9"/><circle cx="5.4" cy="5.6" r="4.5" fill="#f4f4f4" stroke="#111" stroke-width="1.1"/><path d="M7.2 4.2 A2.2 2.2 0 1 0 7.2 7" fill="none" stroke="#000" stroke-width="1.5"/></svg>
<div class="t" style="left:948.7px;top:88px;font-size:12px;line-height:12px;color:#000;letter-spacing:0.554px">*Crypto (Crypto)</div>
<svg style="position:absolute;left:1074.9px;top:85px" width="16" height="16" viewBox="0 0 16 16"><path d="M3.5 1.5 H10.5 L13.5 4.5 V14.5 H3.5 Z" fill="#fbfcff" stroke="#a89030"/><path d="M10.5 1.5 V4.5 H13.5" fill="#e0c060" stroke="#a89030" stroke-width="0.8"/><path d="M8 6.5 H12 M8 8.5 H12 M6 10.5 H12 M5 12.5 H10" stroke="#5a78c0" stroke-width="0.9"/><circle cx="5.4" cy="5.6" r="4.5" fill="#f4f4f4" stroke="#111" stroke-width="1.1"/><path d="M7.2 4.2 A2.2 2.2 0 1 0 7.2 7" fill="none" stroke="#000" stroke-width="1.5"/></svg>
<div class="t" style="left:1094.3px;top:88px;font-size:12px;line-height:12px;color:#000;letter-spacing:-0.418px">*Can_43_LLCE (Can_43_...</div>
<svg style="position:absolute;left:1267.7px;top:85px" width="16" height="16" viewBox="0 0 16 16"><path d="M3.5 1.5 H10.5 L13.5 4.5 V14.5 H3.5 Z" fill="#fbfcff" stroke="#a89030"/><path d="M10.5 1.5 V4.5 H13.5" fill="#e0c060" stroke="#a89030" stroke-width="0.8"/><path d="M8 6.5 H12 M8 8.5 H12 M6 10.5 H12 M5 12.5 H10" stroke="#5a78c0" stroke-width="0.9"/><circle cx="5.4" cy="5.6" r="4.5" fill="#f4f4f4" stroke="#111" stroke-width="1.1"/><path d="M7.2 4.2 A2.2 2.2 0 1 0 7.2 7" fill="none" stroke="#000" stroke-width="1.5"/></svg>
<div class="t" style="left:1287.1px;top:88px;font-size:12px;line-height:12px;color:#000;letter-spacing:0.269px">*EcuM (EcuM)</div>
<svg style="position:absolute;left:1245.5px;top:87.5px" width="11" height="11" viewBox="0 0 11 11"><path d="M1 2.5 L2.5 1 L5.5 4 L8.5 1 L10 2.5 L7 5.5 L10 8.5 L8.5 10 L5.5 7 L2.5 10 L1 8.5 L4 5.5 Z" fill="#fff" stroke="#5a5a5a" stroke-width="1"/></svg>
<svg style="position:absolute;left:1407px;top:86px" width="11" height="6" viewBox="0 0 11 6"><rect x="0.5" y="0.5" width="9.5" height="3" fill="#fff" stroke="#5a5a5a"/></svg>
<svg style="position:absolute;left:1425px;top:84px" width="11" height="11" viewBox="0 0 11 11"><rect x="0.5" y="0.5" width="10" height="10" fill="#fff" stroke="#5a5a5a"/><path d="M0.5 2.5 H10.5" stroke="#5a5a5a" stroke-width="1"/></svg>
<div class="t" style="left:398.0px;top:117px;font-size:15px;line-height:15px;color:#1272d6;letter-spacing:0.532px;font-weight:bold">CanHardwareObject</div>
<svg style="position:absolute;left:1381px;top:119px" width="14" height="16" viewBox="0 0 14 16"><text x="0" y="13" font-size="15" font-family="Liberation Sans" fill="#2a6ab8">@</text></svg>
<svg style="position:absolute;left:1404px;top:119px" width="15" height="15" viewBox="0 0 15 15"><path d="M7.5 1 L14 7.5 H10.5 V14 H4.5 V7.5 H1 Z" fill="#fff" stroke="#0a3a9a" stroke-width="2"/></svg>
<div style="position:absolute;left:1421px;top:117px;width:16px;height:21px;background:#eef3fb"></div>
<svg style="position:absolute;left:1423px;top:119px" width="14" height="16" viewBox="0 0 14 16"><path d="M1 8 L7 2 L13 8 V15 H1Z" fill="#fff8d0" stroke="#a07030"/><path d="M1 8 L7 2 L13 8" fill="none" stroke="#c04020" stroke-width="1.4"/><rect x="5" y="9" width="3" height="5" fill="#40a040"/></svg>
<div style="position:absolute;left:392px;top:145px;width:1045px;height:1px;background:linear-gradient(90deg,#2a86dc 0%,#3a90e0 30%,#e8f0fa 100%)"></div>
<div class="t" style="left:398.0px;top:164px;font-size:12px;line-height:12px;color:#0f72dc;letter-spacing:0.761px">Name</div>
<svg style="position:absolute;left:452px;top:164px" width="16" height="12" viewBox="0 0 16 12"><path d="M0.5 10.5 V1.5 Q0.5 0.5 1.5 0.5 H4.5 L5.5 1.5 H11 Q12 1.5 12 2.5 V4.5" fill="#fdf2d0" stroke="#c08a40"/><path d="M0.5 10.5 L3 4.5 H14.5 L12 10.5 Z" fill="#fbe2a4" stroke="#c08a40"/></svg>
<div style="position:absolute;left:475px;top:157px;width:307px;height:22px;background:#fff;border:1px solid #e2e2e2;border-bottom-color:#8a8a8a;border-radius:2px;box-sizing:border-box"></div>
<div class="t" style="left:477.5px;top:162px;font-size:12px;line-height:12px;color:#000;letter-spacing:0.363px">CanHardwareObject_9</div>
<div style="position:absolute;left:404px;top:202px;width:1036px;height:558px;background:#fff;border:1px solid #a0a0a0;border-radius:8px 6px 0 0;box-sizing:border-box"></div>
<div style="position:absolute;left:405px;top:203px;width:1034px;height:25px;background:#eff4fc;border-radius:0 5px 0 0"></div>
<div style="position:absolute;left:405px;top:228px;width:1035px;height:1px;background:#a0a0a0"></div>
<svg style="position:absolute;left:404px;top:202px" width="80" height="30" viewBox="0 0 80 30"><defs><linearGradient id="gt" x1="0" y1="0" x2="0" y2="1"><stop offset="0" stop-color="#dfe5ef"/><stop offset="0.41" stop-color="#dfe5ef"/><stop offset="0.41" stop-color="#fff"/><stop offset="1" stop-color="#fff"/></linearGradient></defs><path d="M0.5 30 V8 Q0.5 0.5 8 0.5 H41 C46 0.5 50 2 54 6 L66 20 C70 24.5 73 26.5 78 26.5 V30 Z" fill="url(#gt)"/><path d="M0.5 30 V8 Q0.5 0.5 8 0.5 H41 C46 0.5 50 2 54 6 L66 20 C70 24.5 73 26.5 78 26.5 H80" fill="none" stroke="#a0a0a0"/></svg>
<div class="t" style="left:408.0px;top:210px;font-size:12px;line-height:12px;color:#000;letter-spacing:0.219px">General</div>
<div style="position:absolute;left:1424px;top:229px;width:13px;height:514px;background:#f0f0f0"></div>
<div style="position:absolute;left:1431px;top:246px;width:2px;height:275px;background:#8a8a8a"></div>
<div style="position:absolute;left:405px;top:743px;width:1019px;height:16px;background:#f0f0f0"></div>
<div style="position:absolute;left:422px;top:750px;width:943px;height:2px;background:#7a7a7a"></div>
<div style="position:absolute;left:0;top:0;width:1437px;height:1000px;clip-path:inset(229px 13px 257px 405px)">
<div style="position:absolute;left:429px;top:266px;width:9px;height:9px;background:#c8c8c8"></div>
<div class="t" style="left:446.2px;top:267px;font-size:12px;line-height:12px;color:#bdbdbd;letter-spacing:0.483px">FD padding value (0 -&gt; 255)</div>
<svg style="position:absolute;left:976px;top:266px" width="24" height="24" viewBox="0 0 24 24"><path d="M5.5 4.5 H13.5 L16.5 7.5 V18.5 H5.5 Z" fill="#fff" stroke="#b08a30"/><path d="M13.5 4.5 V7.5 H16.5" fill="#e8c878" stroke="#b08a30" stroke-width="0.8"/><path d="M7.5 7.5 H12 M7.5 9.5 H15" stroke="#5a70b0"/><path d="M7.6 13 L8.8 12 V16.5" fill="none" stroke="#3a5590" stroke-width="1.3"/><path d="M10.2 12.8 Q10.6 12 11.6 12 Q13 12.6 12.4 14.2 L10.2 16.5 H13" fill="none" stroke="#3a5590" stroke-width="1.2"/><path d="M12.9 12.4 H14.6 A3.2 3.6 0 0 1 14.6 18.6 H12.9 Z" fill="#fff" stroke="#1414dc" stroke-width="1.8"/></svg>
<div style="position:absolute;left:1002px;top:264px;width:258px;height:23px;background:#d9d9d9;border:2px solid #eeeeee;box-sizing:border-box"></div>
<div class="t" style="left:1005.5px;top:270px;font-size:12px;line-height:12px;color:#8a8a8a">0</div>
<div class="t" style="left:428.0px;top:305px;font-size:12px;line-height:12px;color:#0f72dc;letter-spacing:0.532px">Can Implementation Type</div>
<div class="t" style="left:428.0px;top:345px;font-size:12px;line-height:12px;color:#0f72dc;letter-spacing:0.484px">Can ID Message Type</div>
<div class="t" style="left:428.0px;top:385px;font-size:12px;line-height:12px;color:#0f72dc;letter-spacing:0.465px">Can Object ID (MB Handle)</div>
<div class="t" style="left:428.0px;top:425px;font-size:12px;line-height:12px;color:#0f72dc;letter-spacing:0.473px">Can MB Type</div>
<div class="t" style="left:428.0px;top:465px;font-size:12px;line-height:12px;color:#0f72dc;letter-spacing:0.647px">Add MAC code to transmitted frames.</div>
<div class="t" style="left:428.0px;top:539px;font-size:12px;line-height:12px;color:#0f72dc;letter-spacing:0.397px">Can Controller Reference</div>
<div class="t" style="left:428.0px;top:619px;font-size:12px;line-height:12px;color:#0f72dc;letter-spacing:0.639px">Number of Hw objects used to implement one HOH (1 -&gt; 2016)</div>
<div style="position:absolute;left:1002px;top:302px;width:274px;height:25px;background:#fff;border:1px solid #7a7a7a;border-radius:2px;box-sizing:border-box"></div>
<div class="t" style="left:1005.5px;top:308px;font-size:12px;line-height:12px;color:#000;letter-spacing:-0.200px">BASIC</div>
<svg style="position:absolute;left:1262.5px;top:312px" width="10" height="6" viewBox="0 0 10 6"><path d="M0.5 0.5 L4.5 4.5 L8.5 0.5" fill="none" stroke="#555" stroke-width="1"/></svg>
<svg style="position:absolute;left:1308.5px;top:311.5px" width="8" height="5" viewBox="0 0 8 5"><path d="M0 0 H8 L4 4.5 Z" fill="#222"/></svg>
<div style="position:absolute;left:1002px;top:342px;width:274px;height:25px;background:#fff;border:1px solid #7a7a7a;border-radius:2px;box-sizing:border-box"></div>
<div style="position:absolute;left:1004px;top:345px;width:252px;height:19px;background:#dcdcfa"></div>
<div class="t" style="left:1005.5px;top:348px;font-size:12px;line-height:12px;color:#000;letter-spacing:0.039px">STANDARD</div>
<svg style="position:absolute;left:1262.5px;top:352px" width="10" height="6" viewBox="0 0 10 6"><path d="M0.5 0.5 L4.5 4.5 L8.5 0.5" fill="none" stroke="#555" stroke-width="1"/></svg>
<svg style="position:absolute;left:1308.5px;top:351.5px" width="8" height="5" viewBox="0 0 8 5"><path d="M0 0 H8 L4 4.5 Z" fill="#222"/></svg>
<div style="position:absolute;left:1002px;top:382px;width:274px;height:25px;background:#fff;border:1px solid #7a7a7a;border-radius:2px;box-sizing:border-box"></div>
<div class="t" style="left:1005.5px;top:388px;font-size:12px;line-height:12px;color:#000">9</div>
<svg style="position:absolute;left:1262.5px;top:392px" width="10" height="6" viewBox="0 0 10 6"><path d="M0.5 0.5 L4.5 4.5 L8.5 0.5" fill="none" stroke="#555" stroke-width="1"/></svg>
<svg style="position:absolute;left:1308.5px;top:391.5px" width="8" height="5" viewBox="0 0 8 5"><path d="M0 0 H8 L4 4.5 Z" fill="#222"/></svg>
<div style="position:absolute;left:1002px;top:422px;width:274px;height:25px;background:#fff;border:1px solid #7a7a7a;border-radius:2px;box-sizing:border-box"></div>
<div class="t" style="left:1005.5px;top:428px;font-size:12px;line-height:12px;color:#000;letter-spacing:-0.712px">RECEIVE</div>
<svg style="position:absolute;left:1262.5px;top:432px" width="10" height="6" viewBox="0 0 10 6"><path d="M0.5 0.5 L4.5 4.5 L8.5 0.5" fill="none" stroke="#555" stroke-width="1"/></svg>
<svg style="position:absolute;left:1308.5px;top:431.5px" width="8" height="5" viewBox="0 0 8 5"><path d="M0 0 H8 L4 4.5 Z" fill="#222"/></svg>
<svg style="position:absolute;left:976px;top:304px" width="24" height="24" viewBox="0 0 24 24"><rect x="6.5" y="6.5" width="6" height="13.5" fill="#fff" stroke="#9a9a88"/><path d="M8 9.5 H12 M8 11.5 H12 M8 13.5 H12 M8 15.5 H12 M8 17.5 H12" stroke="#6a80c0" stroke-width="1"/><rect x="12" y="5" width="7" height="7.5" fill="#e23444"/><path d="M13.6 6.6 L17.4 10.9 M17.4 6.6 L13.6 10.9" stroke="#fff" stroke-width="1.4"/><path d="M12.9 13.9 H14.6 A3.2 3.6 0 0 1 14.6 20.1 H12.9 Z" fill="#fff" stroke="#1414dc" stroke-width="1.8"/></svg>
<svg style="position:absolute;left:976px;top:344px" width="24" height="24" viewBox="0 0 24 24"><rect x="6.5" y="6.5" width="6" height="13.5" fill="#fff" stroke="#9a9a88"/><path d="M8 9.5 H12 M8 11.5 H12 M8 13.5 H12 M8 15.5 H12 M8 17.5 H12" stroke="#6a80c0" stroke-width="1"/><rect x="12" y="5" width="7" height="7.5" fill="#e23444"/><path d="M13.6 6.6 L17.4 10.9 M17.4 6.6 L13.6 10.9" stroke="#fff" stroke-width="1.4"/><path d="M12.9 13.9 H14.6 A3.2 3.6 0 0 1 14.6 20.1 H12.9 Z" fill="#fff" stroke="#1414dc" stroke-width="1.8"/></svg>
<svg style="position:absolute;left:976px;top:384px" width="24" height="24" viewBox="0 0 24 24"><rect x="5.5" y="6.5" width="11" height="14" fill="#fff" stroke="#b08a30"/><path d="M7.5 9.5 H12 M7.5 11.5 H12" stroke="#5a70b0"/><path d="M7.6 15.5 L8.8 14.5 V19" fill="none" stroke="#3a5590" stroke-width="1.3"/><path d="M10.2 15.3 Q10.6 14.5 11.6 14.5 Q13 15.1 12.4 16.7 L10.2 19 H13" fill="none" stroke="#3a5590" stroke-width="1.2"/><rect x="12" y="5" width="7" height="7.5" fill="#e23444"/><path d="M13.6 6.6 L17.4 10.9 M17.4 6.6 L13.6 10.9" stroke="#fff" stroke-width="1.4"/><path d="M17.5 14.5 Q15 13 13.5 15 Q12.5 17 13.5 19 Q15 21 17.5 19.5" fill="none" stroke="#10108a" stroke-width="2"/></svg>
<svg style="position:absolute;left:976px;top:424px" width="24" height="24" viewBox="0 0 24 24"><rect x="6.5" y="6.5" width="6" height="13.5" fill="#fff" stroke="#9a9a88"/><path d="M8 9.5 H12 M8 11.5 H12 M8 13.5 H12 M8 15.5 H12 M8 17.5 H12" stroke="#6a80c0" stroke-width="1"/><rect x="12" y="5" width="7" height="7.5" fill="#e23444"/><path d="M13.6 6.6 L17.4 10.9 M17.4 6.6 L13.6 10.9" stroke="#fff" stroke-width="1.4"/></svg>
<svg style="position:absolute;left:1287px;top:307px" width="14" height="14" viewBox="0 0 14 14"><path d="M2 12 L11 3 L13 5 L4 14 Z" fill="#f0b060" stroke="#a06020" stroke-width="0.8"/><path d="M1 13.5 L2 11 L4 13 Z" fill="#203080"/><path d="M11 3 L12.5 1.5 L14 3 L13 5Z" fill="#e0a0a0"/></svg>
<svg style="position:absolute;left:1287px;top:347px" width="14" height="14" viewBox="0 0 14 14"><path d="M2 12 L11 3 L13 5 L4 14 Z" fill="#f0b060" stroke="#a06020" stroke-width="0.8"/><path d="M1 13.5 L2 11 L4 13 Z" fill="#203080"/><path d="M11 3 L12.5 1.5 L14 3 L13 5Z" fill="#e0a0a0"/></svg>
<svg style="position:absolute;left:1287px;top:387px" width="14" height="14" viewBox="0 0 14 14"><path d="M2 12 L11 3 L13 5 L4 14 Z" fill="#f0b060" stroke="#a06020" stroke-width="0.8"/><path d="M1 13.5 L2 11 L4 13 Z" fill="#203080"/><path d="M11 3 L12.5 1.5 L14 3 L13 5Z" fill="#e0a0a0"/></svg>
<div style="position:absolute;left:1293px;top:394px;width:7px;height:8px;background:#8ab8e0;border:1px solid #4a88c0;box-sizing:border-box"></div>
<svg style="position:absolute;left:1287px;top:428px" width="15" height="15" viewBox="0 0 15 15"><path d="M13.5 0.8 L6.5 1.5 L1.2 6.8 L5.2 7.2 L1.5 11.5 L4.5 13.8 L12.5 8.2 L8.2 7.8 Z" fill="url(#wgb)" stroke="#0a2a66" stroke-width="1.3" stroke-linejoin="round"/></svg>
<svg style="position:absolute;left:976px;top:462px" width="24" height="24" viewBox="0 0 24 24"><path d="M5.5 5.5 H13.5 L16.5 8.5 V19.5 H5.5 Z" fill="#fff" stroke="#b08a30"/><path d="M13.5 5.5 V8.5 H16.5" fill="#e8c878" stroke="#b08a30" stroke-width="0.8"/><path d="M8.5 9 L12 16 M12 9 L8 16" stroke="#203050" stroke-width="1.4"/><path d="M12.9 12.9 H14.6 A3.2 3.6 0 0 1 14.6 19.1 H12.9 Z" fill="#fff" stroke="#1414dc" stroke-width="1.8"/></svg>
<div style="position:absolute;left:1015px;top:467px;width:13px;height:16px;background:#f6f6f6;border:2px solid #dcdcdc;border-bottom-color:#cfcfcf;border-radius:2px;box-sizing:border-box"></div>
<div class="t" style="left:1149.2px;top:465px;font-size:12px;line-height:12px;color:#0f72dc;letter-spacing:0.461px">Hardware Object Uses Polling</div>
<svg style="position:absolute;left:1338px;top:462px" width="24" height="24" viewBox="0 0 24 24"><path d="M5.5 5.5 H13.5 L16.5 8.5 V19.5 H5.5 Z" fill="#fff" stroke="#b08a30"/><path d="M13.5 5.5 V8.5 H16.5" fill="#e8c878" stroke="#b08a30" stroke-width="0.8"/><path d="M8.5 9 L12 16 M12 9 L8 16" stroke="#203050" stroke-width="1.4"/><path d="M12.9 12.9 H14.6 A3.2 3.6 0 0 1 14.6 19.1 H12.9 Z" fill="#fff" stroke="#1414dc" stroke-width="1.8"/></svg>
<div style="position:absolute;left:1377px;top:467px;width:13px;height:16px;background:#f6f6f6;border:2px solid #dcdcdc;border-bottom-color:#cfcfcf;border-radius:2px;box-sizing:border-box"></div>
<div style="position:absolute;left:429px;top:501px;width:9px;height:9px;background:#8b1a00;border:1px solid #5a1000;box-sizing:border-box"></div>
<div class="t" style="left:446.0px;top:502px;font-size:12px;line-height:12px;color:#bdbdbd;letter-spacing:0.431px">CanTriggerTransmitEnable</div>
<svg style="position:absolute;left:976px;top:499px" width="24" height="24" viewBox="0 0 24 24"><path d="M5.5 5.5 H13.5 L16.5 8.5 V19.5 H5.5 Z" fill="#fff" stroke="#b08a30"/><path d="M13.5 5.5 V8.5 H16.5" fill="#e8c878" stroke="#b08a30" stroke-width="0.8"/><path d="M8.5 9 L12 16 M12 9 L8 16" stroke="#203050" stroke-width="1.4"/><path d="M12.9 12.9 H14.6 A3.2 3.6 0 0 1 14.6 19.1 H12.9 Z" fill="#fff" stroke="#1414dc" stroke-width="1.8"/></svg>
<div style="position:absolute;left:1015px;top:504px;width:13px;height:16px;background:#f6f6f6;border:2px solid #dcdcdc;border-bottom-color:#cfcfcf;border-radius:2px;box-sizing:border-box"></div>
<svg style="position:absolute;left:976px;top:536px" width="24" height="24" viewBox="0 0 24 24"><rect x="5.5" y="8.5" width="11" height="13" fill="#fff" stroke="#b08a30"/><circle cx="8" cy="15" r="4.3" fill="#fff" fill-opacity="0.6" stroke="#2a6ab8" stroke-width="1.3"/><path d="M9.8 13 Q7 12 6.5 15 Q6.5 17.5 8.5 16.5 L9.8 13 L9.3 17 Q10.5 17.5 11.3 16" fill="none" stroke="#10509a" stroke-width="1.2"/><rect x="12" y="7" width="7" height="7.5" fill="#e23444"/><path d="M13.6 8.6 L17.4 12.9 M17.4 8.6 L13.6 12.9" stroke="#fff" stroke-width="1.4"/></svg>
<div style="position:absolute;left:1002px;top:536px;width:398px;height:25px;background:#fff;border:1px solid #7a7a7a;border-radius:2px;box-sizing:border-box"></div>
<div class="t" style="left:1005.5px;top:542px;font-size:12px;line-height:12px;color:#000;letter-spacing:0.153px">/Can_43_LLCE/Can/CanConfigSet_0/CanController_0</div>
<svg style="position:absolute;left:1385.5px;top:546px" width="10" height="6" viewBox="0 0 10 6"><path d="M0.5 0.5 L4.5 4.5 L8.5 0.5" fill="none" stroke="#555" stroke-width="1"/></svg>
<svg style="position:absolute;left:1411px;top:541px" width="15" height="15" viewBox="0 0 15 15"><path d="M13.5 0.8 L6.5 1.5 L1.2 6.8 L5.2 7.2 L1.5 11.5 L4.5 13.8 L12.5 8.2 L8.2 7.8 Z" fill="url(#wgd)" stroke="#111" stroke-width="1.3" stroke-linejoin="round"/></svg>
<div style="position:absolute;left:429px;top:578px;width:9px;height:9px;background:#c8c8c8"></div>
<div class="t" style="left:446.0px;top:579px;font-size:12px;line-height:12px;color:#bdbdbd;letter-spacing:0.375px">Can MainFunction RW Period Reference</div>
<svg style="position:absolute;left:976px;top:576px" width="24" height="24" viewBox="0 0 24 24"><path d="M5.5 8.5 H13.5 L16.5 11.5 V21.5 H5.5 Z" fill="#fff" stroke="#b08a30"/><path d="M13.5 8.5 V11.5 H16.5" fill="#e8c878" stroke="#b08a30" stroke-width="0.8"/><circle cx="8" cy="15" r="4.3" fill="#fff" fill-opacity="0.6" stroke="#2a6ab8" stroke-width="1.3"/><path d="M9.8 13 Q7 12 6.5 15 Q6.5 17.5 8.5 16.5 L9.8 13 L9.3 17 Q10.5 17.5 11.3 16" fill="none" stroke="#10509a" stroke-width="1.2"/><path d="M12.9 15.9 H14.6 A3.2 3.6 0 0 1 14.6 22.1 H12.9 Z" fill="#fff" stroke="#1414dc" stroke-width="1.8"/></svg>
<div style="position:absolute;left:1002px;top:576px;width:398px;height:25px;background:#fff;border:1px solid #dadada;border-radius:2px;box-sizing:border-box"></div>
<div style="position:absolute;left:1005px;top:579px;width:375px;height:19px;background:#d9d9d9"></div>
<svg style="position:absolute;left:1385.5px;top:586px" width="10" height="6" viewBox="0 0 10 6"><path d="M0.5 0.5 L4.5 4.5 L8.5 0.5" fill="none" stroke="#aaa" stroke-width="1"/></svg>
<svg style="position:absolute;left:976px;top:612px" width="24" height="24" viewBox="0 0 24 24"><rect x="5.5" y="10.5" width="11" height="14" fill="#fff" stroke="#b08a30"/><path d="M7.5 13.5 H12 M7.5 15.5 H12" stroke="#5a70b0"/><path d="M7.6 19.5 L8.8 18.5 V23" fill="none" stroke="#3a5590" stroke-width="1.3"/><path d="M10.2 19.3 Q10.6 18.5 11.6 18.5 Q13 19.1 12.4 20.7 L10.2 23 H13" fill="none" stroke="#3a5590" stroke-width="1.2"/><path d="M13.6 18.5 H15.8 L14.6 20.3 Q16.2 20.7 15.8 22.5 Q15 23.3 13.6 22.7" fill="none" stroke="#3a5590" stroke-width="1.2"/><rect x="12" y="9" width="7" height="7.5" fill="#e23444"/><path d="M13.6 10.6 L17.4 14.9 M17.4 10.6 L13.6 14.9" stroke="#fff" stroke-width="1.4"/></svg>
<div style="position:absolute;left:1002px;top:616px;width:258px;height:23px;background:#fff;border:1px solid #e4e4e4;border-bottom-color:#8a8a8a;border-radius:2px;box-sizing:border-box"></div>
<div class="t" style="left:1005.5px;top:621px;font-size:12px;line-height:12px;color:#000">1</div>
<svg style="position:absolute;left:1273.5px;top:620px" width="15" height="15" viewBox="0 0 15 15"><path d="M13.5 0.8 L6.5 1.5 L1.2 6.8 L5.2 7.2 L1.5 11.5 L4.5 13.8 L12.5 8.2 L8.2 7.8 Z" fill="url(#wgb)" stroke="#0a2a66" stroke-width="1.3" stroke-linejoin="round"/></svg>
<svg style="position:absolute;left:1296px;top:625px" width="8" height="5" viewBox="0 0 8 5"><path d="M0 0 H8 L4 4.5 Z" fill="#222"/></svg>
<div style="position:absolute;left:423px;top:649px;width:1000px;height:23px;background:#dfe7f1;border-top:1px solid #c3d4ea;box-sizing:border-box"></div>
<svg style="position:absolute;left:429px;top:658px" width="9" height="6" viewBox="0 0 9 6"><path d="M0 0 H9 L4.5 5 Z" fill="#1a6ad0"/></svg>
<div class="t" style="left:442.7px;top:655px;font-size:12px;line-height:12px;color:#000;letter-spacing:0.480px;font-weight:bold">CanHwFilter</div>
<div class="t" style="left:439.2px;top:693px;font-size:12px;line-height:12px;color:#0f72dc;letter-spacing:0.595px">Name</div>
<svg style="position:absolute;left:493px;top:693px" width="16" height="12" viewBox="0 0 16 12"><path d="M0.5 10.5 V1.5 Q0.5 0.5 1.5 0.5 H4.5 L5.5 1.5 H11 Q12 1.5 12 2.5 V4.5" fill="#fdf2d0" stroke="#c08a40"/><path d="M0.5 10.5 L3 4.5 H14.5 L12 10.5 Z" fill="#fbe2a4" stroke="#c08a40"/></svg>
<div style="position:absolute;left:515px;top:685px;width:308px;height:23px;background:#fff;border:1px solid #e4e4e4;border-bottom-color:#8a8a8a;border-radius:2px;box-sizing:border-box"></div>
<div class="t" style="left:518.5px;top:692px;font-size:12px;line-height:12px;color:#000;letter-spacing:0.137px">CanHwFilter</div>
<div style="position:absolute;left:433px;top:718px;width:990px;height:1px;background:#6a6a6a"></div>
<div class="t" style="left:443.5px;top:736px;font-size:12px;line-height:12px;color:#0f72dc;letter-spacing:0.397px">Can Hw Filter Code (0 -&gt; 4294967295)</div>
<svg style="position:absolute;left:921px;top:730px" width="24" height="24" viewBox="0 0 24 24"><rect x="5.5" y="10.5" width="11" height="14" fill="#fff" stroke="#b08a30"/><path d="M7.5 13.5 H12 M7.5 15.5 H12" stroke="#5a70b0"/><path d="M7.6 19.5 L8.8 18.5 V23" fill="none" stroke="#3a5590" stroke-width="1.3"/><path d="M10.2 19.3 Q10.6 18.5 11.6 18.5 Q13 19.1 12.4 20.7 L10.2 23 H13" fill="none" stroke="#3a5590" stroke-width="1.2"/><path d="M13.6 18.5 H15.8 L14.6 20.3 Q16.2 20.7 15.8 22.5 Q15 23.3 13.6 22.7" fill="none" stroke="#3a5590" stroke-width="1.2"/><rect x="12" y="9" width="7" height="7.5" fill="#e23444"/><path d="M13.6 10.6 L17.4 14.9 M17.4 10.6 L13.6 14.9" stroke="#fff" stroke-width="1.4"/></svg>
<div style="position:absolute;left:947px;top:734px;width:258px;height:23px;background:#fff;border:1px solid #e4e4e4;border-bottom-color:#8a8a8a;border-radius:2px;box-sizing:border-box"></div>
<div class="t" style="left:950.5px;top:740px;font-size:12px;line-height:12px;color:#000">1</div>
<svg style="position:absolute;left:1220px;top:737px" width="15" height="15" viewBox="0 0 15 15"><path d="M13.5 0.8 L6.5 1.5 L1.2 6.8 L5.2 7.2 L1.5 11.5 L4.5 13.8 L12.5 8.2 L8.2 7.8 Z" fill="url(#wgb)" stroke="#0a2a66" stroke-width="1.3" stroke-linejoin="round"/></svg>
</div>
<div style="position:absolute;left:441px;top:770px;width:996px;height:22px;background:#ccdaeb;border-top:1px solid #b6bccc;box-sizing:border-box"></div>
<svg style="position:absolute;left:389px;top:768px" width="54" height="26" viewBox="0 0 54 26"><path d="M0.5 0 V19 Q0.5 23.5 5 23.5 H47 Q51.5 23.5 51.5 19 V2" fill="#fff" stroke="#a8aebe"/></svg>
<div class="t" style="left:396.2px;top:775px;font-size:12px;line-height:12px;color:#000;letter-spacing:0.364px">Default</div>
<div style="position:absolute;left:389px;top:799px;width:837px;height:210px;background:#fff;border-radius:5px"></div>
<div style="position:absolute;left:389px;top:799px;width:837px;height:27px;background:#f3f4fa;border-radius:5px 5px 0 0"></div>
<div style="position:absolute;left:476px;top:799px;width:137px;height:27px;background:linear-gradient(#e3e7f1,#ffffff);border-radius:7px 7px 0 0"></div>
<svg style="position:absolute;left:395px;top:806px" width="16" height="16" viewBox="0 0 16 16"><path d="M4.5 2.5 H13.5 V12 L11 14.5 H4.5 Z" fill="#fff" stroke="#dcc890"/><circle cx="5" cy="5" r="4.5" fill="#f4a4ac" stroke="#e88088"/><path d="M3.2 3.2 L6.8 6.8 M6.8 3.2 L3.2 6.8" stroke="#fff" stroke-width="1.3"/><path d="M3 12.5 H4 M5 12.5 H6" stroke="#888"/></svg>
<div class="t" style="left:413.7px;top:808px;font-size:12px;line-height:12px;color:#8a8a8a;letter-spacing:0.105px;font-weight:bold">Error Log</div>
<svg style="position:absolute;left:480px;top:805px" width="15" height="16" viewBox="0 0 15 16"><rect x="0.5" y="0.5" width="13" height="14" fill="#fff" stroke="#8a9ab8"/><circle cx="5" cy="4.5" r="2.6" fill="#e83848"/><path d="M5 8 L8.5 13.5 H1.5Z" fill="#f8c030" stroke="#d08020" stroke-width="0.7"/><path d="M10 2 V13 M10 13 H13" stroke="#9aa8c0" stroke-width="1"/><path d="M11 4 H13 M11 7 H13" stroke="#b0b8c8"/></svg>
<div class="t" style="left:499.5px;top:808px;font-size:12px;line-height:12px;color:#000;letter-spacing:0.432px">Problems View</div>
<svg style="position:absolute;left:593px;top:808px" width="11" height="11" viewBox="0 0 11 11"><path d="M1 2.5 L2.5 1 L5.5 4 L8.5 1 L10 2.5 L7 5.5 L10 8.5 L8.5 10 L5.5 7 L2.5 10 L1 8.5 L4 5.5 Z" fill="#fff" stroke="#5a5a5a" stroke-width="1"/></svg>
<svg style="position:absolute;left:1075px;top:806px" width="14" height="14" viewBox="0 0 14 14"><rect x="0.5" y="0.5" width="9" height="9" fill="#dde6f2" stroke="#8a9ab8"/><rect x="3.5" y="3.5" width="9" height="9" fill="#f2f6fb" stroke="#7a8aa8"/><path d="M4.8 8 H11.2" stroke="#0a3a80" stroke-width="1.5"/><path d="M8 4.8 V11.2" stroke="#0a3a80" stroke-width="1.5"/></svg>
<svg style="position:absolute;left:1098px;top:806px" width="14" height="14" viewBox="0 0 14 14"><rect x="0.5" y="0.5" width="9" height="9" fill="#dde6f2" stroke="#8a9ab8"/><rect x="3.5" y="3.5" width="9" height="9" fill="#f2f6fb" stroke="#7a8aa8"/><path d="M4.8 8 H11.2" stroke="#0a3a80" stroke-width="1.5"/></svg>
<div style="position:absolute;left:1118px;top:805px;width:1px;height:16px;background:#9a9a9a"></div>
<svg style="position:absolute;left:1128px;top:805px" width="16" height="16" viewBox="0 0 16 16"><path d="M4.5 0.5 H14.5 V12.5 H4.5Z" fill="#fffbe8" stroke="#c0a050"/><path d="M6.5 3 H13 M6.5 5.5 H13 M6.5 8 H13 M6.5 10.5 H13" stroke="#4a6ab0"/><path d="M4 7 V14 H1 L4.5 16 L8 14" fill="#2a5aa8"/></svg>
<svg style="position:absolute;left:1159px;top:807px" width="11" height="7" viewBox="0 0 11 7"><path d="M0.5 0.5 H10.5 L5.5 5.5 Z" fill="#fff" stroke="#5a5a5a"/></svg>
<svg style="position:absolute;left:1179px;top:808px" width="11" height="6" viewBox="0 0 11 6"><rect x="0.5" y="0.5" width="9.5" height="3" fill="#fff" stroke="#5a5a5a"/></svg>
<svg style="position:absolute;left:1202px;top:806px" width="11" height="11" viewBox="0 0 11 11"><rect x="0.5" y="0.5" width="10" height="10" fill="#fff" stroke="#5a5a5a"/><path d="M0.5 2.5 H10.5" stroke="#5a5a5a" stroke-width="1"/></svg>
<div style="position:absolute;left:392px;top:826px;width:816px;height:157px;background:#fff"></div>
<div class="t" style="left:398.3px;top:833px;font-size:12px;line-height:12px;color:#000;letter-spacing:0.535px">Message</div>
<svg style="position:absolute;left:731.5px;top:827px" width="10" height="6" viewBox="0 0 10 6"><path d="M0.5 0.5 L4.5 4.5 L8.5 0.5" fill="none" stroke="#777" stroke-width="1"/></svg>
<div class="t" style="left:1108.1px;top:833px;font-size:12px;line-height:12px;color:#000;letter-spacing:0.568px">Error Code</div>
<div style="position:absolute;left:0;top:0;width:1437px;height:1000px;clip-path:inset(826px 229px 17px 1179px)">
<div class="t" style="left:1184.9px;top:833px;font-size:12px;line-height:12px;color:#000">Path</div>
</div>
<div style="position:absolute;left:1078px;top:827px;width:1px;height:156px;background:#e6e6e6"></div>
<div style="position:absolute;left:1178px;top:827px;width:1px;height:156px;background:#e6e6e6"></div>
<div style="position:absolute;left:392px;top:850px;width:686px;height:20px;background:#f4f4f4"></div>
<div style="position:absolute;left:392px;top:870px;width:816px;height:20px;background:#d9d9d9"></div>
<div style="position:absolute;left:392px;top:890px;width:816px;height:1px;background:#e6e6e6"></div>
<div style="position:absolute;left:392px;top:910px;width:816px;height:1px;background:#e6e6e6"></div>
<div style="position:absolute;left:392px;top:930px;width:816px;height:1px;background:#e6e6e6"></div>
<div style="position:absolute;left:392px;top:950px;width:816px;height:1px;background:#e6e6e6"></div>
<div style="position:absolute;left:392px;top:970px;width:816px;height:1px;background:#e6e6e6"></div>
<svg style="position:absolute;left:417px;top:856px" width="10" height="7" viewBox="0 0 10 7"><path d="M1 1.5 L5 5.5 L9 1.5" fill="none" stroke="#404040" stroke-width="1.3"/></svg>
<svg style="position:absolute;left:433px;top:852px" width="17" height="16" viewBox="0 0 17 16"><path d="M0.5 5 L1.5 3.5 H5.5 L6.5 5 H12 V14.5 H0.5Z" fill="#f3d690" stroke="#b08a30"/><path d="M0.5 14.5 L3 8.5 H15.5 L13 14.5Z" fill="#7aa8e8" stroke="#2a5ab0"/><path d="M12 1 V9 M10 3 H14" stroke="#111" stroke-width="1.6"/><circle cx="9" cy="1.5" r="1.2" fill="#e02020"/></svg>
<div class="t" style="left:453.5px;top:855px;font-size:12px;line-height:12px;color:#000;letter-spacing:0.121px">Sample_App_LLCE_CAN2CAN(100 of 18464)</div>
<div style="position:absolute;left:0;top:0;width:1437px;height:1000px;clip-path:inset(850px 359px 17px 392px)">
<svg style="position:absolute;left:451px;top:868px" width="24" height="24" viewBox="0 0 24 24"><rect x="6.5" y="6.5" width="6" height="13.5" fill="#fff" stroke="#9a9a88"/><path d="M8 9.5 H12 M8 11.5 H12 M8 13.5 H12 M8 15.5 H12 M8 17.5 H12" stroke="#6a80c0" stroke-width="1"/><rect x="12" y="5" width="7" height="7.5" fill="#e23444"/><path d="M13.6 6.6 L17.4 10.9 M17.4 6.6 L13.6 10.9" stroke="#fff" stroke-width="1.4"/><path d="M12.9 13.9 H14.6 A3.2 3.6 0 0 1 14.6 20.1 H12.9 Z" fill="#fff" stroke="#1414dc" stroke-width="1.8"/></svg>
<div class="t" style="left:472.7px;top:875px;font-size:12px;line-height:12px;color:#000;letter-spacing:0.555px">The variant attribute of the node</div>
<div class="t" style="left:665.2px;top:875px;font-size:12px;line-height:12px;color:#000;letter-spacing:-0.085px">/AUTOSAR/TOP-LEVEL-PACKAGES/Can_43_LLCE/ELEMENTS/Can</div>
<div class="t" style="left:1035.5px;top:875px;font-size:12px;line-height:12px;color:#000;letter-spacing:0.385px">/CanConfigSet_0</div>
<svg style="position:absolute;left:451px;top:888px" width="24" height="24" viewBox="0 0 24 24"><rect x="6.5" y="6.5" width="6" height="13.5" fill="#fff" stroke="#9a9a88"/><path d="M8 9.5 H12 M8 11.5 H12 M8 13.5 H12 M8 15.5 H12 M8 17.5 H12" stroke="#6a80c0" stroke-width="1"/><rect x="12" y="5" width="7" height="7.5" fill="#e23444"/><path d="M13.6 6.6 L17.4 10.9 M17.4 6.6 L13.6 10.9" stroke="#fff" stroke-width="1.4"/><path d="M12.9 13.9 H14.6 A3.2 3.6 0 0 1 14.6 20.1 H12.9 Z" fill="#fff" stroke="#1414dc" stroke-width="1.8"/></svg>
<div class="t" style="left:472.7px;top:895px;font-size:12px;line-height:12px;color:#000;letter-spacing:0.555px">The variant attribute of the node</div>
<div class="t" style="left:665.2px;top:895px;font-size:12px;line-height:12px;color:#000;letter-spacing:-0.085px">/AUTOSAR/TOP-LEVEL-PACKAGES/Can_43_LLCE/ELEMENTS/Can</div>
<div class="t" style="left:1035.5px;top:895px;font-size:12px;line-height:12px;color:#000;letter-spacing:0.385px">/CanConfigSet_0</div>
<svg style="position:absolute;left:451px;top:908px" width="24" height="24" viewBox="0 0 24 24"><rect x="6.5" y="6.5" width="6" height="13.5" fill="#fff" stroke="#9a9a88"/><path d="M8 9.5 H12 M8 11.5 H12 M8 13.5 H12 M8 15.5 H12 M8 17.5 H12" stroke="#6a80c0" stroke-width="1"/><rect x="12" y="5" width="7" height="7.5" fill="#e23444"/><path d="M13.6 6.6 L17.4 10.9 M17.4 6.6 L13.6 10.9" stroke="#fff" stroke-width="1.4"/><path d="M12.9 13.9 H14.6 A3.2 3.6 0 0 1 14.6 20.1 H12.9 Z" fill="#fff" stroke="#1414dc" stroke-width="1.8"/></svg>
<div class="t" style="left:472.7px;top:915px;font-size:12px;line-height:12px;color:#000;letter-spacing:0.555px">The variant attribute of the node</div>
<div class="t" style="left:665.2px;top:915px;font-size:12px;line-height:12px;color:#000;letter-spacing:-0.085px">/AUTOSAR/TOP-LEVEL-PACKAGES/Can_43_LLCE/ELEMENTS/Can</div>
<div class="t" style="left:1035.5px;top:915px;font-size:12px;line-height:12px;color:#000;letter-spacing:0.385px">/CanConfigSet_0</div>
<svg style="position:absolute;left:451px;top:928px" width="24" height="24" viewBox="0 0 24 24"><rect x="6.5" y="6.5" width="6" height="13.5" fill="#fff" stroke="#9a9a88"/><path d="M8 9.5 H12 M8 11.5 H12 M8 13.5 H12 M8 15.5 H12 M8 17.5 H12" stroke="#6a80c0" stroke-width="1"/><rect x="12" y="5" width="7" height="7.5" fill="#e23444"/><path d="M13.6 6.6 L17.4 10.9 M17.4 6.6 L13.6 10.9" stroke="#fff" stroke-width="1.4"/><path d="M12.9 13.9 H14.6 A3.2 3.6 0 0 1 14.6 20.1 H12.9 Z" fill="#fff" stroke="#1414dc" stroke-width="1.8"/></svg>
<div class="t" style="left:472.7px;top:935px;font-size:12px;line-height:12px;color:#000;letter-spacing:0.555px">The variant attribute of the node</div>
<div class="t" style="left:665.2px;top:935px;font-size:12px;line-height:12px;color:#000;letter-spacing:-0.085px">/AUTOSAR/TOP-LEVEL-PACKAGES/Can_43_LLCE/ELEMENTS/Can</div>
<div class="t" style="left:1035.5px;top:935px;font-size:12px;line-height:12px;color:#000;letter-spacing:0.385px">/CanConfigSet_0</div>
<svg style="position:absolute;left:451px;top:948px" width="24" height="24" viewBox="0 0 24 24"><rect x="6.5" y="6.5" width="6" height="13.5" fill="#fff" stroke="#9a9a88"/><path d="M8 9.5 H12 M8 11.5 H12 M8 13.5 H12 M8 15.5 H12 M8 17.5 H12" stroke="#6a80c0" stroke-width="1"/><rect x="12" y="5" width="7" height="7.5" fill="#e23444"/><path d="M13.6 6.6 L17.4 10.9 M17.4 6.6 L13.6 10.9" stroke="#fff" stroke-width="1.4"/><path d="M12.9 13.9 H14.6 A3.2 3.6 0 0 1 14.6 20.1 H12.9 Z" fill="#fff" stroke="#1414dc" stroke-width="1.8"/></svg>
<div class="t" style="left:472.7px;top:955px;font-size:12px;line-height:12px;color:#000;letter-spacing:0.555px">The variant attribute of the node</div>
<div class="t" style="left:665.2px;top:955px;font-size:12px;line-height:12px;color:#000;letter-spacing:-0.085px">/AUTOSAR/TOP-LEVEL-PACKAGES/Can_43_LLCE/ELEMENTS/Can</div>
<div class="t" style="left:1035.5px;top:955px;font-size:12px;line-height:12px;color:#000;letter-spacing:0.385px">/CanConfigSet_0</div>
<svg style="position:absolute;left:451px;top:968px" width="24" height="24" viewBox="0 0 24 24"><rect x="6.5" y="6.5" width="6" height="13.5" fill="#fff" stroke="#9a9a88"/><path d="M8 9.5 H12 M8 11.5 H12 M8 13.5 H12 M8 15.5 H12 M8 17.5 H12" stroke="#6a80c0" stroke-width="1"/><rect x="12" y="5" width="7" height="7.5" fill="#e23444"/><path d="M13.6 6.6 L17.4 10.9 M17.4 6.6 L13.6 10.9" stroke="#fff" stroke-width="1.4"/><path d="M12.9 13.9 H14.6 A3.2 3.6 0 0 1 14.6 20.1 H12.9 Z" fill="#fff" stroke="#1414dc" stroke-width="1.8"/></svg>
<div class="t" style="left:472.7px;top:975px;font-size:12px;line-height:12px;color:#000;letter-spacing:0.555px">The variant attribute of the node</div>
<div class="t" style="left:665.2px;top:975px;font-size:12px;line-height:12px;color:#000;letter-spacing:-0.085px">/AUTOSAR/TOP-LEVEL-PACKAGES/Can_43_LLCE/ELEMENTS/Can</div>
<div class="t" style="left:1035.5px;top:975px;font-size:12px;line-height:12px;color:#000;letter-spacing:0.385px">/CanConfigSet_0</div>
</div>
<div style="position:absolute;left:0;top:0;width:1437px;height:1000px;clip-path:inset(850px 229px 17px 1078px)">
<div class="t" style="left:1140.5px;top:875px;font-size:12px;line-height:12px;color:#000;letter-spacing:0.310px">95034</div>
<div class="t" style="left:1183.1px;top:875px;font-size:12px;line-height:12px;color:#000;letter-spacing:0.500px">/AUTOSAR</div>
<div class="t" style="left:1140.5px;top:895px;font-size:12px;line-height:12px;color:#000;letter-spacing:0.310px">95034</div>
<div class="t" style="left:1183.1px;top:895px;font-size:12px;line-height:12px;color:#000;letter-spacing:0.500px">/AUTOSAR</div>
<div class="t" style="left:1140.5px;top:915px;font-size:12px;line-height:12px;color:#000;letter-spacing:0.310px">95034</div>
<div class="t" style="left:1183.1px;top:915px;font-size:12px;line-height:12px;color:#000;letter-spacing:0.500px">/AUTOSAR</div>
<div class="t" style="left:1140.5px;top:935px;font-size:12px;line-height:12px;color:#000;letter-spacing:0.310px">95034</div>
<div class="t" style="left:1183.1px;top:935px;font-size:12px;line-height:12px;color:#000;letter-spacing:0.500px">/AUTOSAR</div>
<div class="t" style="left:1140.5px;top:955px;font-size:12px;line-height:12px;color:#000;letter-spacing:0.310px">95034</div>
<div class="t" style="left:1183.1px;top:955px;font-size:12px;line-height:12px;color:#000;letter-spacing:0.500px">/AUTOSAR</div>
<div class="t" style="left:1140.5px;top:975px;font-size:12px;line-height:12px;color:#000;letter-spacing:0.310px">95034</div>
<div class="t" style="left:1183.1px;top:975px;font-size:12px;line-height:12px;color:#000;letter-spacing:0.500px">/AUTOSAR</div>
</div>
<div style="position:absolute;left:1208px;top:827px;width:16px;height:156px;background:#f0f0f0"></div>
<div style="position:absolute;left:1215px;top:846px;width:2px;height:17px;background:#8a8a8a"></div>
<div style="position:absolute;left:392px;top:983px;width:832px;height:17px;background:#f0f0f0"></div>
<div style="position:absolute;left:409px;top:991px;width:647px;height:2px;background:#7a7a7a"></div>
<div style="position:absolute;left:1230px;top:799px;width:220px;height:210px;background:#fff;border-radius:5px 0 0 0"></div>
<div style="position:absolute;left:1230px;top:799px;width:210px;height:26px;background:#f3f4fa;border-radius:5px 0 0 0"></div>
<div style="position:absolute;left:1230px;top:799px;width:111px;height:26px;background:linear-gradient(#e3e7f1,#ffffff);border-radius:5px 7px 0 0"></div>
<svg style="position:absolute;left:1237px;top:805px" width="15" height="14" viewBox="0 0 15 14"><rect x="0.5" y="0.5" width="14" height="13" fill="#fff" stroke="#6a7a9a"/><path d="M0.5 3.5 H14.5" stroke="#6a7a9a" stroke-width="1.5"/><path d="M0.5 7 H14.5 M0.5 10 H14.5 M4.5 3 V13.5" stroke="#9aa8c0"/></svg>
<div class="t" style="left:1255.4px;top:808px;font-size:12px;line-height:12px;color:#000;letter-spacing:0.457px">Properties</div>
<svg style="position:absolute;left:1322.5px;top:807.5px" width="11" height="11" viewBox="0 0 11 11"><path d="M1 2.5 L2.5 1 L5.5 4 L8.5 1 L10 2.5 L7 5.5 L10 8.5 L8.5 10 L5.5 7 L2.5 10 L1 8.5 L4 5.5 Z" fill="#fff" stroke="#5a5a5a" stroke-width="1"/></svg>
<div style="position:absolute;left:1234px;top:826px;width:203px;height:30px;background:linear-gradient(#ffffff,#e6edf8);border-bottom:1px solid #b8cbe6;box-sizing:border-box"></div>
<div class="t" style="left:1238.4px;top:834px;font-size:15px;line-height:15px;color:#1272d6;letter-spacing:0.370px;font-weight:bold">Properties for CanIdType</div>
<div style="position:absolute;left:1234px;top:856px;width:189px;height:144px;background:#ededed"></div>
<div style="position:absolute;left:1234px;top:866px;width:189px;height:1px;background:#a8a8a8"></div>
<div style="position:absolute;left:1234px;top:867px;width:189px;height:23px;background:#fff"></div>
<div class="t" style="left:1241.0px;top:872px;font-size:12px;line-height:12px;color:#000;letter-spacing:0.410px;font-weight:bold">Description</div>
<div style="position:absolute;left:1234px;top:890px;width:189px;height:24px;background:linear-gradient(#d8d8d8,#e6e6e6 30%,#c8c8c8);border-top:1px solid #f4f4f4;border-bottom:1px solid #a0a0a0;box-sizing:border-box"></div>
<div class="t" style="left:1241.0px;top:896px;font-size:12px;line-height:12px;color:#000;letter-spacing:0.698px">Information</div>
<div style="position:absolute;left:1234px;top:914px;width:189px;height:24px;background:linear-gradient(#d8d8d8,#e6e6e6 30%,#c8c8c8);border-top:1px solid #f4f4f4;border-bottom:1px solid #a0a0a0;box-sizing:border-box"></div>
<div class="t" style="left:1241.0px;top:920px;font-size:12px;line-height:12px;color:#000;letter-spacing:0.459px">Problems</div>
<div style="position:absolute;left:1234px;top:938px;width:189px;height:24px;background:linear-gradient(#d8d8d8,#e6e6e6 30%,#c8c8c8);border-top:1px solid #f4f4f4;border-bottom:1px solid #a0a0a0;box-sizing:border-box"></div>
<div class="t" style="left:1241.0px;top:944px;font-size:12px;line-height:12px;color:#000;letter-spacing:0.451px">PostBuildVariantConditions</div>
<div style="position:absolute;left:1234px;top:962px;width:189px;height:24px;background:linear-gradient(#d8d8d8,#e6e6e6 30%,#c8c8c8);border-top:1px solid #f4f4f4;border-bottom:1px solid #a0a0a0;box-sizing:border-box"></div>
<div class="t" style="left:1241.0px;top:968px;font-size:12px;line-height:12px;color:#000;letter-spacing:0.412px">Comments</div>
<div style="position:absolute;left:1234px;top:986px;width:189px;height:14px;background:linear-gradient(#f0f0f0,#e0e0e0);border-top:1px solid #fff;box-sizing:border-box"></div>
<svg style="position:absolute;left:1322px;top:993px" width="12" height="7" viewBox="0 0 12 7"><path d="M0.5 0.5 H11.5 L6 6Z" fill="#fff" stroke="#444"/></svg>
<div style="position:absolute;left:1423px;top:856px;width:14px;height:144px;background:#fffde4;border-left:1px solid #d8d8c8;box-sizing:border-box"></div>
<div class="t" style="left:1431.5px;top:872px;font-size:12px;line-height:12px;color:#000">C</div>
<div style="position:absolute;left:1431px;top:894px;width:5px;height:1px;background:#222"></div>
<div style="position:absolute;left:1431px;top:906px;width:5px;height:1px;background:#222"></div>
<div style="position:absolute;left:1431px;top:918px;width:5px;height:1px;background:#222"></div>
</body></html>
